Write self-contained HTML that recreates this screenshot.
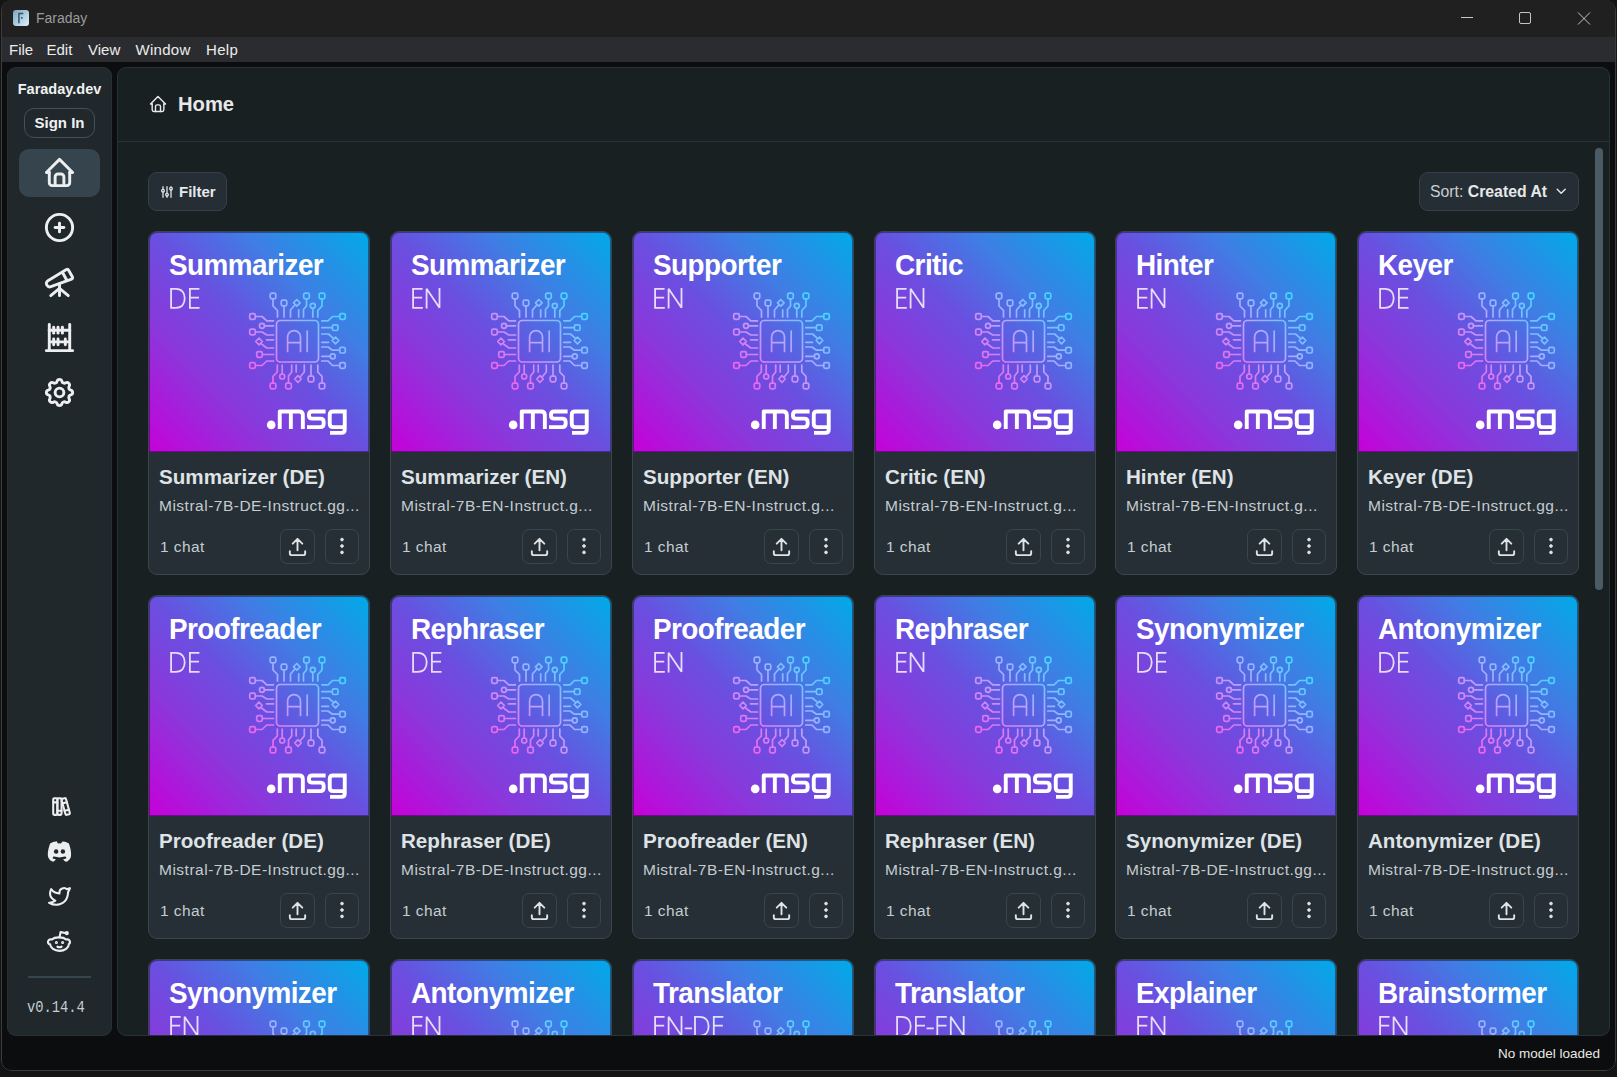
<!DOCTYPE html>
<html><head><meta charset="utf-8"><title>Faraday</title>
<style>
*{margin:0;padding:0;box-sizing:border-box}
html,body{width:1617px;height:1077px;overflow:hidden;background:#141414;font-family:"Liberation Sans",sans-serif;}
.win{position:absolute;left:1px;top:0;width:1615px;height:1071px;border-radius:10px 10px 10px 10px;background:#0b0d0e;overflow:hidden}
.frame{position:absolute;left:0;top:-1px;width:1615px;height:1072px;border:1px solid #3b3b3b;border-radius:10px;z-index:50}
.titlebar{position:absolute;left:0;top:0;width:1615px;height:37px;background:#202020}
.title{position:absolute;left:35px;top:10px;font-size:14px;color:#9b9b9b;line-height:17px}
.wc{position:absolute;top:0;height:37px}
.menubar{position:absolute;left:0;top:37px;width:1615px;height:25px;background:#2b2c2f}
.menu{position:absolute;top:3.5px;font-size:15px;color:#ececec;line-height:18px}
.side{position:absolute;left:6px;top:67px;width:105px;height:969px;background:#20282c;border-radius:9px;box-shadow:inset 0 0 0 1px #263136}
.main{position:absolute;left:116px;top:67px;width:1493px;height:969px;background:#192022;border:1px solid #28323a;border-radius:9px;overflow:hidden}
.hdr{position:absolute;left:0;top:0;width:100%;height:74px;border-bottom:1px solid #28333a}
.scroll{position:absolute;left:0;top:75px;width:100%;height:894px;overflow:hidden}
.btn{position:absolute;background:#252e34;border:1px solid #354149;border-radius:9px;color:#e6e8ea}
.card{position:absolute;width:222px;height:344px;background:#262f35;border:1px solid #3a464d;border-radius:9px;overflow:hidden}
.card .img{position:absolute;left:0;top:0;width:220px;height:220px;background:linear-gradient(45deg,#c600d8 0%,#8a38dc 30%,#6a4fe0 50%,#3f7ee4 72%,#00aae8 100%);border-radius:8px 8px 0 0;overflow:hidden;box-shadow:inset 0 0 0 1px rgba(20,10,60,0.45)}
.card .img svg{position:absolute;left:0;top:0}
.t1{position:absolute;left:20px;top:16px;font-size:30px;font-weight:bold;color:#fff;letter-spacing:-0.6px;line-height:34px;white-space:nowrap;transform:scaleX(0.93);transform-origin:0 0}
.nm{position:absolute;left:10px;top:233px;font-size:20.6px;font-weight:bold;color:#dfe3e6;line-height:24px;white-space:nowrap}
.md{position:absolute;left:10px;top:265px;letter-spacing:0.5px;font-size:15.5px;color:#c5ccd1;line-height:18px;white-space:nowrap}
.ch{position:absolute;left:11px;top:306px;letter-spacing:0.4px;font-size:15.5px;color:#c5ccd1;line-height:18px}
.b1,.b2{position:absolute;top:297px;width:35px;height:35px;border:1px solid #38454c;border-radius:7px;color:#dfe3e6}
.b1{left:131px} .b2{left:176px;width:34px}
.b1 svg{position:absolute;left:4.8px;top:4.9px} .b2 svg{position:absolute;left:4.6px;top:5.3px}
.b1 svg path{fill:none;stroke:currentColor;stroke-width:2;stroke-linecap:round;stroke-linejoin:round}
.b2 svg circle{fill:currentColor;stroke:currentColor;stroke-width:1}
.sicon{position:absolute;color:#eceeef}
.status{position:absolute;right:16px;top:1046px;font-size:13.5px;color:#e8e8e2;line-height:16px}
</style></head><body>
<svg width="0" height="0" style="position:absolute">
<defs>
<linearGradient id="cg" gradientUnits="userSpaceOnUse" x1="5" y1="102" x2="102" y2="5">
<stop offset="0" stop-color="#ff4fe6"/><stop offset="0.5" stop-color="#b9a4ff"/><stop offset="1" stop-color="#1fe4ff"/>
</linearGradient>
</defs></svg>
<div class="win">
 <div class="frame"></div>
 <div class="titlebar">
  <svg style="position:absolute;left:12px;top:10px" width="16" height="16" viewBox="0 0 16 16"><defs><linearGradient id="ag" x1="0" y1="0" x2="1" y2="1"><stop offset="0" stop-color="#7ea4c0"/><stop offset="0.6" stop-color="#b4d3e6"/><stop offset="1" stop-color="#e0f3fc"/></linearGradient></defs><rect x="0" y="0" width="16" height="16" rx="3" fill="url(#ag)"/><path d="M5.9 13.2V3.5H10.3" fill="none" stroke="#3a5264" stroke-width="1.5"/><rect x="8" y="7.1" width="1.6" height="1.6" fill="#3a5264"/></svg>
  <div class="title">Faraday</div>
  <svg class="wc" style="left:1439px" width="175" height="37" viewBox="0 0 175 37" fill="none" stroke="#c5c5c5" stroke-width="1">
   <path d="M21 17.5H33"/>
   <rect x="79.5" y="12.5" width="11" height="11" rx="1.5"/>
   <path d="M138 12.5L150 24.5M150 12.5L138 24.5"/>
  </svg>
 </div>
 <div class="menubar">
  <div class="menu" style="left:8px">File</div>
  <div class="menu" style="left:45.5px">Edit</div>
  <div class="menu" style="left:87px">View</div>
  <div class="menu" style="left:134.5px;letter-spacing:0.3px">Window</div>
  <div class="menu" style="left:205px;letter-spacing:0.3px">Help</div>
 </div>
 <div class="side">
  <div style="position:absolute;left:0;top:13px;width:105px;text-align:center;font-size:14.5px;font-weight:bold;color:#f0f1f2;line-height:18px">Faraday.dev</div>
  <div style="position:absolute;left:17px;top:41px;width:71px;height:30px;border:1px solid #40515a;border-radius:10px;text-align:center;font-size:15px;font-weight:bold;color:#f0f1f2;line-height:28px">Sign In</div>
  <div style="position:absolute;left:12px;top:82px;width:81px;height:48px;background:#36454d;border-radius:10px"></div>
  <svg class="sicon" style="left:35.0px;top:87.8px" width="35" height="35" viewBox="0 0 24 24" fill="none" stroke="currentColor" stroke-width="2" stroke-linecap="round" stroke-linejoin="round"><path d="M5 12l-2 0l9 -9l9 9l-2 0"/><path d="M5 12v7a2 2 0 0 0 2 2h10a2 2 0 0 0 2 -2v-7"/><path d="M9 21v-6a2 2 0 0 1 2 -2h2a2 2 0 0 1 2 2v6"/></svg><svg class="sicon" style="left:34.8px;top:142.8px" width="35" height="35" viewBox="0 0 24 24" fill="none" stroke="currentColor" stroke-width="2" stroke-linecap="round" stroke-linejoin="round"><circle cx="12" cy="12" r="9"/><path d="M9 12h6"/><path d="M12 9v6"/></svg><svg class="sicon" style="left:34.8px;top:197.7px" width="35" height="35" viewBox="0 0 24 24" fill="none" stroke="currentColor" stroke-width="2" stroke-linecap="round" stroke-linejoin="round"><path d="M6 21l6 -5l6 5"/><path d="M12 13v8"/><path d="M3.294 13.678l.166 .281c.52 .88 1.624 1.265 2.605 .91l14.242 -5.165a1.023 1.023 0 0 0 .565 -1.456l-2.62 -4.705a1.087 1.087 0 0 0 -1.447 -.42l-.056 .032l-12.694 7.618c-1.02 .613 -1.357 1.897 -.76 2.905z"/><path d="M14 5l3 5.5"/></svg><svg class="sicon" style="left:34.8px;top:252.7px" width="35" height="35" viewBox="0 0 24 24" fill="none" stroke="currentColor" stroke-width="2" stroke-linecap="round" stroke-linejoin="round"><path d="M5 3v18"/><path d="M19 21v-18"/><path d="M5 7h14"/><path d="M5 15h14"/><path d="M8 13v4"/><path d="M11 13v4"/><path d="M16 13v4"/><path d="M14 5v4"/><path d="M11 5v4"/><path d="M8 5v4"/><path d="M3 21h18"/></svg><svg class="sicon" style="left:34.8px;top:307.5px" width="35" height="35" viewBox="0 0 24 24" fill="none" stroke="currentColor" stroke-width="2" stroke-linecap="round" stroke-linejoin="round"><path d="M10.325 4.317c.426 -1.756 2.924 -1.756 3.35 0a1.724 1.724 0 0 0 2.573 1.066c1.543 -.94 3.31 .826 2.37 2.37a1.724 1.724 0 0 0 1.065 2.572c1.756 .426 1.756 2.924 0 3.35a1.724 1.724 0 0 0 -1.066 2.573c.94 1.543 -.826 3.31 -2.37 2.37a1.724 1.724 0 0 0 -2.572 1.065c-.426 1.756 -2.924 1.756 -3.35 0a1.724 1.724 0 0 0 -2.573 -1.066c-1.543 .94 -3.31 -.826 -2.37 -2.37a1.724 1.724 0 0 0 -1.065 -2.572c-1.756 -.426 -1.756 -2.924 0 -3.35a1.724 1.724 0 0 0 1.066 -2.573c-.94 -1.543 .826 -3.31 2.37 -2.37c1 .608 2.296 .07 2.572 -1.065z"/><path d="M9 12a3 3 0 1 0 6 0a3 3 0 0 0 -6 0"/></svg><svg class="sicon" style="left:40.9px;top:726.9px" width="25" height="25" viewBox="0 0 24 24" fill="none" stroke="currentColor" stroke-width="2" stroke-linecap="round" stroke-linejoin="round"><path d="M5 5a1 1 0 0 1 1 -1h2a1 1 0 0 1 1 1v14a1 1 0 0 1 -1 1h-2a1 1 0 0 1 -1 -1z"/><path d="M9 5a1 1 0 0 1 1 -1h2a1 1 0 0 1 1 1v14a1 1 0 0 1 -1 1h-2a1 1 0 0 1 -1 -1z"/><path d="M5 8h4"/><path d="M9 16h4"/><path d="M13.803 4.56l2.184 -.53c.562 -.135 1.133 .19 1.282 .732l3.695 13.418a1.02 1.02 0 0 1 -.634 1.219l-.133 .041l-2.184 .53c-.562 .135 -1.133 -.19 -1.282 -.732l-3.695 -13.418a1.02 1.02 0 0 1 .634 -1.219l.133 -.041z"/><path d="M14 9l4 -1"/><path d="M16 16l3.923 -.98"/></svg><svg class="sicon" style="left:39.0px;top:770.7px" width="27" height="27" viewBox="0 0 24 24" fill="currentColor" stroke="none"><path d="M14.983 3l.123 .006c2.014 .214 3.527 .672 4.966 1.673a1 1 0 0 1 .371 .488c1.876 5.315 2.373 9.987 1.451 12.28c-1.003 2.005 -2.606 3.553 -4.394 3.553c-.732 0 -1.693 -.968 -2.328 -2.045a21.512 21.512 0 0 0 2.103 -.493a1 1 0 1 0 -.55 -1.924c-3.32 .95 -6.13 .95 -9.45 0a1 1 0 0 0 -.55 1.924c.717 .204 1.416 .37 2.103 .494c-.635 1.075 -1.596 2.044 -2.328 2.044c-1.788 0 -3.391 -1.548 -4.428 -3.629c-.888 -2.217 -.39 -6.888 1.485 -12.203a1 1 0 0 1 .371 -.488c1.439 -1.001 2.952 -1.459 4.966 -1.673a1 1 0 0 1 .935 .435l.063 .107l.651 1.285l.137 -.016a12.97 12.97 0 0 1 2.643 0l.134 .015l.65 -1.284a1 1 0 0 1 .754 -.54l.122 -.009zm-5.983 7a2 2 0 0 0 -1.977 1.697l-.018 .154l-.005 .149l.005 .15a2 2 0 1 0 1.995 -2.15zm6 0a2 2 0 0 0 -1.977 1.697l-.018 .154l-.005 .149l.005 .15a2 2 0 1 0 1.995 -2.15z"/></svg><svg class="sicon" style="left:39.9px;top:816.9px" width="25" height="25" viewBox="0 0 24 24" fill="none" stroke="currentColor" stroke-width="2" stroke-linecap="round" stroke-linejoin="round"><path d="M22 4.01c-1 .49 -1.98 .689 -3 .99c-1.121 -1.265 -2.783 -1.335 -4.38 -.737s-2.643 2.06 -2.62 3.737v1c-3.245 .083 -6.135 -1.395 -8 -4c0 0 -4.182 7.433 4 11c-1.872 1.247 -3.739 2.088 -6 2c3.308 1.803 6.913 2.423 10.034 1.517c3.58 -1.04 6.522 -3.723 7.651 -7.742a13.84 13.84 0 0 0 .497 -3.753c0 -.249 1.51 -2.772 1.818 -4.013z"/></svg><svg class="sicon" style="left:40.0px;top:861.7px" width="25" height="25" viewBox="0 0 24 24" fill="none" stroke="currentColor" stroke-width="2" stroke-linecap="round" stroke-linejoin="round"><path d="M12 8c2.648 0 5.028 .826 6.675 2.14a2.5 2.5 0 0 1 2.326 4.36c0 3.59 -4.03 6.5 -9 6.5c-4.875 0 -8.845 -2.8 -9 -6.294l-1 -.206a2.5 2.5 0 0 1 2.326 -4.36c1.646 -1.313 4.026 -2.14 6.674 -2.14z"/><path d="M12 8l1 -5l6 1"/><path d="M19 4m-1 0a1 1 0 1 0 2 0a1 1 0 1 0 -2 0"/><circle cx="9" cy="13" r=".5" fill="currentColor"/><circle cx="15" cy="13" r=".5" fill="currentColor"/><path d="M10 17c.667 .333 1.333 .5 2 .5s1.333 -.167 2 -.5"/></svg>
  <div style="position:absolute;left:21px;top:909px;width:63px;height:2px;background:#36464e"></div>
  <div style="position:absolute;left:20px;top:931.5px;font-family:'Liberation Mono',monospace;font-size:17px;color:#c7cdd2;line-height:18px;transform:scaleX(0.81);transform-origin:0 0">v0.14.4</div>
 </div>
 <div class="main">
  <div class="hdr">
   <svg style="position:absolute;left:30px;top:26px" width="20" height="20" viewBox="0 0 24 24" fill="none" stroke="currentColor" stroke-width="1.7" stroke-linecap="round" stroke-linejoin="round" color="#e8eaec"><path d="M5 12l-2 0l9 -9l9 9l-2 0"/><path d="M5 12v7a2 2 0 0 0 2 2h10a2 2 0 0 0 2 -2v-7"/><path d="M9 21v-6a2 2 0 0 1 2 -2h2a2 2 0 0 1 2 2v6"/></svg>
   <div style="position:absolute;left:60px;top:23px;font-size:20.2px;font-weight:bold;color:#e6e8ea;line-height:26px">Home</div>
  </div>
  <div class="scroll">
   <div class="btn" style="left:30px;top:29px;width:79px;height:39px">
     <svg style="position:absolute;left:9.8px;top:10.8px" width="16" height="16" viewBox="0 0 24 24" fill="none" stroke="currentColor" stroke-width="1.9" stroke-linecap="round" stroke-linejoin="round"><path d="M6 4v4M6 12v8M12 4v10M12 18v2M18 4v1M18 9v11"/><circle cx="6" cy="10" r="2"/><circle cx="12" cy="16" r="2"/><circle cx="18" cy="7" r="2"/></svg>
     <div style="position:absolute;left:30px;top:10px;font-size:15px;font-weight:bold;line-height:18px">Filter</div>
   </div>
   <div class="btn" style="left:1301px;top:29px;width:160px;height:39px">
     <div style="position:absolute;left:10px;top:9.5px;font-size:15.8px;line-height:18px;white-space:nowrap"><span style="color:#c9ced2">Sort:</span> <b>Created At</b></div>
     <svg style="position:absolute;left:135.5px;top:15px" width="11" height="8" viewBox="0 0 11 8" fill="none" stroke="#e6e8ea" stroke-width="1.4" stroke-linecap="round" stroke-linejoin="round"><path d="M1.2 1.2L5.2 5.2L9.2 1.2"/></svg>
   </div>
   <div class="card" style="left:30.0px;top:88.0px">
<div class="img"><svg width="220" height="220" viewBox="0 0 220 220"><g transform="translate(95,56)" fill="none" stroke="url(#cg)" stroke-width="1.7" stroke-linecap="round" stroke-linejoin="round"><rect x="32.5" y="32.5" width="42" height="41.5" rx="3.8"/><path d="M43.6,63.5V49A6.45,6.45 0 0 1 56.5,49V63.5M43.6,54.6H56.5M63.2,43V63.5"/><rect x="26.20" y="5.20" width="5.6" height="5.6" rx="1.6"/><path d="M29,11L29,18L33.5,22.5L33.5,29"/><rect x="37.20" y="12.20" width="5.6" height="5.6" rx="1.6"/><path d="M40,18L40,29"/><path d="M52.8,11.5L56.099999999999994,14.8L52.8,18.1L49.5,14.8Z" stroke-linejoin="round"/><path d="M50.6,17.3L46.5,22L46.5,29"/><path d="M54.7,21.8L54.7,29"/><rect x="59.70" y="5.20" width="5.6" height="5.6" rx="1.6"/><path d="M62.5,11L62.5,18L59.5,21.5L59.5,29"/><circle cx="68.8" cy="17.8" r="2.5"/><path d="M68.8,20.3L68.8,29"/><rect x="75.20" y="5.20" width="5.6" height="5.6" rx="1.6"/><path d="M78,11L78,18L73.8,22.5L73.8,29"/><path d="M33.3,77L33.3,84L29,88.3L29,95"/><rect x="26.20" y="95.20" width="5.6" height="5.6" rx="1.6"/><path d="M38.2,77L38.2,86"/><circle cx="38.2" cy="88.5" r="2.5"/><path d="M47.7,77L47.7,84L44.5,88L44.5,95"/><rect x="41.70" y="95.20" width="5.6" height="5.6" rx="1.6"/><path d="M52.2,77L52.2,84"/><path d="M60.3,77L60.3,84L56.3,88.8"/><path d="M54,87.7L57.3,91L54,94.3L50.7,91Z" stroke-linejoin="round"/><path d="M67,77L67,88"/><rect x="64.20" y="88.20" width="5.6" height="5.6" rx="1.6"/><path d="M73.8,77L73.8,84L78,88.3L78,95"/><rect x="75.20" y="95.20" width="5.6" height="5.6" rx="1.6"/><rect x="5.70" y="25.70" width="5.6" height="5.6" rx="1.6"/><path d="M11.5,28.5L18,28.5L22.8,32.8L29.5,32.8"/><circle cx="18" cy="37.8" r="2.5"/><path d="M20.5,37.8L29.5,37.8"/><rect x="5.70" y="41.20" width="5.6" height="5.6" rx="1.6"/><path d="M11.5,44L18,44L22.8,47L29.5,47"/><path d="M22.5,51.8L29.5,51.8"/><path d="M15,50.2L18.3,53.5L15,56.8L11.7,53.5Z" stroke-linejoin="round"/><path d="M17.5,56L22.8,60L29.5,60"/><rect x="12.70" y="63.70" width="5.6" height="5.6" rx="1.6"/><path d="M18.5,66.5L29.5,66.5"/><rect x="5.70" y="74.70" width="5.6" height="5.6" rx="1.6"/><path d="M11.5,77.5L18,77.5L22.8,73L29.5,73"/><path d="M77.8,32.8L84,32.8L88.5,28.5L95.5,28.5"/><rect x="95.70" y="25.70" width="5.6" height="5.6" rx="1.6"/><path d="M77.8,39.7L88.2,39.7"/><rect x="88.40" y="36.90" width="5.6" height="5.6" rx="1.6"/><path d="M77.8,46L84.5,46L89.2,50.2"/><path d="M91.5,49.2L94.8,52.5L91.5,55.8L88.2,52.5Z" stroke-linejoin="round"/><path d="M77.8,54.3L84.5,54.3"/><path d="M77.8,59L84,59L88.5,62.2L95.5,62.2"/><rect x="95.70" y="59.40" width="5.6" height="5.6" rx="1.6"/><path d="M77.8,68.3L86.3,68.3"/><circle cx="88.8" cy="68.3" r="2.5"/><path d="M77.8,73L84,73L88.5,77.5L95.5,77.5"/><rect x="95.70" y="74.70" width="5.6" height="5.6" rx="1.6"/></g><circle cx="122.2" cy="192.9" r="4.3" fill="#fff"/><g fill="none" stroke="#fff" stroke-width="3.9" stroke-linejoin="round"><path d="M130.75,196.9V179.5H150.3Q153.85,179.5 153.85,183.2V196.9M141.85,179.5V196.9"/><path d="M176.6,179.5H163.3Q159.95,179.5 159.95,182.8V183.4Q159.95,186.6 163.3,186.6H171.3Q174.65,186.6 174.65,189.9V191.8Q174.65,195.1 171.3,195.1H158"/><path d="M195.75,179.5H184.1Q180.75,179.5 180.75,182.8V191.8Q180.75,195.1 184.1,195.1H195.75M195.75,177.6V197.6Q195.75,200.9 192.4,200.9H181"/></g><path d="M22.10,56.8V75.8H26.90C33.30,75.8 35.70,71.2 35.70,66.3C35.70,61.4 33.30,56.8 26.90,56.8ZM50.40,56.8H40.90V75.8H50.60M40.90,65.7H50.00" fill="none" stroke="#fff" stroke-opacity="0.82" stroke-width="1.8" stroke-linejoin="miter" stroke-miterlimit="1.5"/></svg>
<div class="t1">Summarizer</div></div>
<div class="nm">Summarizer (DE)</div><div class="md">Mistral-7B-DE-Instruct.gg...</div>
<div class="ch">1 chat</div>
<div class="b1"><svg width="23" height="23" viewBox="0 0 24 24"><path d="M4 17v2a2 2 0 0 0 2 2h12a2 2 0 0 0 2 -2v-2M7 9l5 -5l5 5M12 4l0 12"/></svg></div>
<div class="b2"><svg width="22" height="22" viewBox="0 0 24 24"><circle cx="12" cy="5" r="1.5"/><circle cx="12" cy="12" r="1.5"/><circle cx="12" cy="19" r="1.5"/></svg></div>
</div><div class="card" style="left:272.0px;top:88.0px">
<div class="img"><svg width="220" height="220" viewBox="0 0 220 220"><g transform="translate(95,56)" fill="none" stroke="url(#cg)" stroke-width="1.7" stroke-linecap="round" stroke-linejoin="round"><rect x="32.5" y="32.5" width="42" height="41.5" rx="3.8"/><path d="M43.6,63.5V49A6.45,6.45 0 0 1 56.5,49V63.5M43.6,54.6H56.5M63.2,43V63.5"/><rect x="26.20" y="5.20" width="5.6" height="5.6" rx="1.6"/><path d="M29,11L29,18L33.5,22.5L33.5,29"/><rect x="37.20" y="12.20" width="5.6" height="5.6" rx="1.6"/><path d="M40,18L40,29"/><path d="M52.8,11.5L56.099999999999994,14.8L52.8,18.1L49.5,14.8Z" stroke-linejoin="round"/><path d="M50.6,17.3L46.5,22L46.5,29"/><path d="M54.7,21.8L54.7,29"/><rect x="59.70" y="5.20" width="5.6" height="5.6" rx="1.6"/><path d="M62.5,11L62.5,18L59.5,21.5L59.5,29"/><circle cx="68.8" cy="17.8" r="2.5"/><path d="M68.8,20.3L68.8,29"/><rect x="75.20" y="5.20" width="5.6" height="5.6" rx="1.6"/><path d="M78,11L78,18L73.8,22.5L73.8,29"/><path d="M33.3,77L33.3,84L29,88.3L29,95"/><rect x="26.20" y="95.20" width="5.6" height="5.6" rx="1.6"/><path d="M38.2,77L38.2,86"/><circle cx="38.2" cy="88.5" r="2.5"/><path d="M47.7,77L47.7,84L44.5,88L44.5,95"/><rect x="41.70" y="95.20" width="5.6" height="5.6" rx="1.6"/><path d="M52.2,77L52.2,84"/><path d="M60.3,77L60.3,84L56.3,88.8"/><path d="M54,87.7L57.3,91L54,94.3L50.7,91Z" stroke-linejoin="round"/><path d="M67,77L67,88"/><rect x="64.20" y="88.20" width="5.6" height="5.6" rx="1.6"/><path d="M73.8,77L73.8,84L78,88.3L78,95"/><rect x="75.20" y="95.20" width="5.6" height="5.6" rx="1.6"/><rect x="5.70" y="25.70" width="5.6" height="5.6" rx="1.6"/><path d="M11.5,28.5L18,28.5L22.8,32.8L29.5,32.8"/><circle cx="18" cy="37.8" r="2.5"/><path d="M20.5,37.8L29.5,37.8"/><rect x="5.70" y="41.20" width="5.6" height="5.6" rx="1.6"/><path d="M11.5,44L18,44L22.8,47L29.5,47"/><path d="M22.5,51.8L29.5,51.8"/><path d="M15,50.2L18.3,53.5L15,56.8L11.7,53.5Z" stroke-linejoin="round"/><path d="M17.5,56L22.8,60L29.5,60"/><rect x="12.70" y="63.70" width="5.6" height="5.6" rx="1.6"/><path d="M18.5,66.5L29.5,66.5"/><rect x="5.70" y="74.70" width="5.6" height="5.6" rx="1.6"/><path d="M11.5,77.5L18,77.5L22.8,73L29.5,73"/><path d="M77.8,32.8L84,32.8L88.5,28.5L95.5,28.5"/><rect x="95.70" y="25.70" width="5.6" height="5.6" rx="1.6"/><path d="M77.8,39.7L88.2,39.7"/><rect x="88.40" y="36.90" width="5.6" height="5.6" rx="1.6"/><path d="M77.8,46L84.5,46L89.2,50.2"/><path d="M91.5,49.2L94.8,52.5L91.5,55.8L88.2,52.5Z" stroke-linejoin="round"/><path d="M77.8,54.3L84.5,54.3"/><path d="M77.8,59L84,59L88.5,62.2L95.5,62.2"/><rect x="95.70" y="59.40" width="5.6" height="5.6" rx="1.6"/><path d="M77.8,68.3L86.3,68.3"/><circle cx="88.8" cy="68.3" r="2.5"/><path d="M77.8,73L84,73L88.5,77.5L95.5,77.5"/><rect x="95.70" y="74.70" width="5.6" height="5.6" rx="1.6"/></g><circle cx="122.2" cy="192.9" r="4.3" fill="#fff"/><g fill="none" stroke="#fff" stroke-width="3.9" stroke-linejoin="round"><path d="M130.75,196.9V179.5H150.3Q153.85,179.5 153.85,183.2V196.9M141.85,179.5V196.9"/><path d="M176.6,179.5H163.3Q159.95,179.5 159.95,182.8V183.4Q159.95,186.6 163.3,186.6H171.3Q174.65,186.6 174.65,189.9V191.8Q174.65,195.1 171.3,195.1H158"/><path d="M195.75,179.5H184.1Q180.75,179.5 180.75,182.8V191.8Q180.75,195.1 184.1,195.1H195.75M195.75,177.6V197.6Q195.75,200.9 192.4,200.9H181"/></g><path d="M31.60,56.8H22.10V75.8H31.80M22.10,65.7H31.20M35.60,76.6V56.8L48.50,75.8V56" fill="none" stroke="#fff" stroke-opacity="0.82" stroke-width="1.8" stroke-linejoin="miter" stroke-miterlimit="1.5"/></svg>
<div class="t1">Summarizer</div></div>
<div class="nm">Summarizer (EN)</div><div class="md">Mistral-7B-EN-Instruct.g...</div>
<div class="ch">1 chat</div>
<div class="b1"><svg width="23" height="23" viewBox="0 0 24 24"><path d="M4 17v2a2 2 0 0 0 2 2h12a2 2 0 0 0 2 -2v-2M7 9l5 -5l5 5M12 4l0 12"/></svg></div>
<div class="b2"><svg width="22" height="22" viewBox="0 0 24 24"><circle cx="12" cy="5" r="1.5"/><circle cx="12" cy="12" r="1.5"/><circle cx="12" cy="19" r="1.5"/></svg></div>
</div><div class="card" style="left:514.0px;top:88.0px">
<div class="img"><svg width="220" height="220" viewBox="0 0 220 220"><g transform="translate(95,56)" fill="none" stroke="url(#cg)" stroke-width="1.7" stroke-linecap="round" stroke-linejoin="round"><rect x="32.5" y="32.5" width="42" height="41.5" rx="3.8"/><path d="M43.6,63.5V49A6.45,6.45 0 0 1 56.5,49V63.5M43.6,54.6H56.5M63.2,43V63.5"/><rect x="26.20" y="5.20" width="5.6" height="5.6" rx="1.6"/><path d="M29,11L29,18L33.5,22.5L33.5,29"/><rect x="37.20" y="12.20" width="5.6" height="5.6" rx="1.6"/><path d="M40,18L40,29"/><path d="M52.8,11.5L56.099999999999994,14.8L52.8,18.1L49.5,14.8Z" stroke-linejoin="round"/><path d="M50.6,17.3L46.5,22L46.5,29"/><path d="M54.7,21.8L54.7,29"/><rect x="59.70" y="5.20" width="5.6" height="5.6" rx="1.6"/><path d="M62.5,11L62.5,18L59.5,21.5L59.5,29"/><circle cx="68.8" cy="17.8" r="2.5"/><path d="M68.8,20.3L68.8,29"/><rect x="75.20" y="5.20" width="5.6" height="5.6" rx="1.6"/><path d="M78,11L78,18L73.8,22.5L73.8,29"/><path d="M33.3,77L33.3,84L29,88.3L29,95"/><rect x="26.20" y="95.20" width="5.6" height="5.6" rx="1.6"/><path d="M38.2,77L38.2,86"/><circle cx="38.2" cy="88.5" r="2.5"/><path d="M47.7,77L47.7,84L44.5,88L44.5,95"/><rect x="41.70" y="95.20" width="5.6" height="5.6" rx="1.6"/><path d="M52.2,77L52.2,84"/><path d="M60.3,77L60.3,84L56.3,88.8"/><path d="M54,87.7L57.3,91L54,94.3L50.7,91Z" stroke-linejoin="round"/><path d="M67,77L67,88"/><rect x="64.20" y="88.20" width="5.6" height="5.6" rx="1.6"/><path d="M73.8,77L73.8,84L78,88.3L78,95"/><rect x="75.20" y="95.20" width="5.6" height="5.6" rx="1.6"/><rect x="5.70" y="25.70" width="5.6" height="5.6" rx="1.6"/><path d="M11.5,28.5L18,28.5L22.8,32.8L29.5,32.8"/><circle cx="18" cy="37.8" r="2.5"/><path d="M20.5,37.8L29.5,37.8"/><rect x="5.70" y="41.20" width="5.6" height="5.6" rx="1.6"/><path d="M11.5,44L18,44L22.8,47L29.5,47"/><path d="M22.5,51.8L29.5,51.8"/><path d="M15,50.2L18.3,53.5L15,56.8L11.7,53.5Z" stroke-linejoin="round"/><path d="M17.5,56L22.8,60L29.5,60"/><rect x="12.70" y="63.70" width="5.6" height="5.6" rx="1.6"/><path d="M18.5,66.5L29.5,66.5"/><rect x="5.70" y="74.70" width="5.6" height="5.6" rx="1.6"/><path d="M11.5,77.5L18,77.5L22.8,73L29.5,73"/><path d="M77.8,32.8L84,32.8L88.5,28.5L95.5,28.5"/><rect x="95.70" y="25.70" width="5.6" height="5.6" rx="1.6"/><path d="M77.8,39.7L88.2,39.7"/><rect x="88.40" y="36.90" width="5.6" height="5.6" rx="1.6"/><path d="M77.8,46L84.5,46L89.2,50.2"/><path d="M91.5,49.2L94.8,52.5L91.5,55.8L88.2,52.5Z" stroke-linejoin="round"/><path d="M77.8,54.3L84.5,54.3"/><path d="M77.8,59L84,59L88.5,62.2L95.5,62.2"/><rect x="95.70" y="59.40" width="5.6" height="5.6" rx="1.6"/><path d="M77.8,68.3L86.3,68.3"/><circle cx="88.8" cy="68.3" r="2.5"/><path d="M77.8,73L84,73L88.5,77.5L95.5,77.5"/><rect x="95.70" y="74.70" width="5.6" height="5.6" rx="1.6"/></g><circle cx="122.2" cy="192.9" r="4.3" fill="#fff"/><g fill="none" stroke="#fff" stroke-width="3.9" stroke-linejoin="round"><path d="M130.75,196.9V179.5H150.3Q153.85,179.5 153.85,183.2V196.9M141.85,179.5V196.9"/><path d="M176.6,179.5H163.3Q159.95,179.5 159.95,182.8V183.4Q159.95,186.6 163.3,186.6H171.3Q174.65,186.6 174.65,189.9V191.8Q174.65,195.1 171.3,195.1H158"/><path d="M195.75,179.5H184.1Q180.75,179.5 180.75,182.8V191.8Q180.75,195.1 184.1,195.1H195.75M195.75,177.6V197.6Q195.75,200.9 192.4,200.9H181"/></g><path d="M31.60,56.8H22.10V75.8H31.80M22.10,65.7H31.20M35.60,76.6V56.8L48.50,75.8V56" fill="none" stroke="#fff" stroke-opacity="0.82" stroke-width="1.8" stroke-linejoin="miter" stroke-miterlimit="1.5"/></svg>
<div class="t1">Supporter</div></div>
<div class="nm">Supporter (EN)</div><div class="md">Mistral-7B-EN-Instruct.g...</div>
<div class="ch">1 chat</div>
<div class="b1"><svg width="23" height="23" viewBox="0 0 24 24"><path d="M4 17v2a2 2 0 0 0 2 2h12a2 2 0 0 0 2 -2v-2M7 9l5 -5l5 5M12 4l0 12"/></svg></div>
<div class="b2"><svg width="22" height="22" viewBox="0 0 24 24"><circle cx="12" cy="5" r="1.5"/><circle cx="12" cy="12" r="1.5"/><circle cx="12" cy="19" r="1.5"/></svg></div>
</div><div class="card" style="left:756.0px;top:88.0px">
<div class="img"><svg width="220" height="220" viewBox="0 0 220 220"><g transform="translate(95,56)" fill="none" stroke="url(#cg)" stroke-width="1.7" stroke-linecap="round" stroke-linejoin="round"><rect x="32.5" y="32.5" width="42" height="41.5" rx="3.8"/><path d="M43.6,63.5V49A6.45,6.45 0 0 1 56.5,49V63.5M43.6,54.6H56.5M63.2,43V63.5"/><rect x="26.20" y="5.20" width="5.6" height="5.6" rx="1.6"/><path d="M29,11L29,18L33.5,22.5L33.5,29"/><rect x="37.20" y="12.20" width="5.6" height="5.6" rx="1.6"/><path d="M40,18L40,29"/><path d="M52.8,11.5L56.099999999999994,14.8L52.8,18.1L49.5,14.8Z" stroke-linejoin="round"/><path d="M50.6,17.3L46.5,22L46.5,29"/><path d="M54.7,21.8L54.7,29"/><rect x="59.70" y="5.20" width="5.6" height="5.6" rx="1.6"/><path d="M62.5,11L62.5,18L59.5,21.5L59.5,29"/><circle cx="68.8" cy="17.8" r="2.5"/><path d="M68.8,20.3L68.8,29"/><rect x="75.20" y="5.20" width="5.6" height="5.6" rx="1.6"/><path d="M78,11L78,18L73.8,22.5L73.8,29"/><path d="M33.3,77L33.3,84L29,88.3L29,95"/><rect x="26.20" y="95.20" width="5.6" height="5.6" rx="1.6"/><path d="M38.2,77L38.2,86"/><circle cx="38.2" cy="88.5" r="2.5"/><path d="M47.7,77L47.7,84L44.5,88L44.5,95"/><rect x="41.70" y="95.20" width="5.6" height="5.6" rx="1.6"/><path d="M52.2,77L52.2,84"/><path d="M60.3,77L60.3,84L56.3,88.8"/><path d="M54,87.7L57.3,91L54,94.3L50.7,91Z" stroke-linejoin="round"/><path d="M67,77L67,88"/><rect x="64.20" y="88.20" width="5.6" height="5.6" rx="1.6"/><path d="M73.8,77L73.8,84L78,88.3L78,95"/><rect x="75.20" y="95.20" width="5.6" height="5.6" rx="1.6"/><rect x="5.70" y="25.70" width="5.6" height="5.6" rx="1.6"/><path d="M11.5,28.5L18,28.5L22.8,32.8L29.5,32.8"/><circle cx="18" cy="37.8" r="2.5"/><path d="M20.5,37.8L29.5,37.8"/><rect x="5.70" y="41.20" width="5.6" height="5.6" rx="1.6"/><path d="M11.5,44L18,44L22.8,47L29.5,47"/><path d="M22.5,51.8L29.5,51.8"/><path d="M15,50.2L18.3,53.5L15,56.8L11.7,53.5Z" stroke-linejoin="round"/><path d="M17.5,56L22.8,60L29.5,60"/><rect x="12.70" y="63.70" width="5.6" height="5.6" rx="1.6"/><path d="M18.5,66.5L29.5,66.5"/><rect x="5.70" y="74.70" width="5.6" height="5.6" rx="1.6"/><path d="M11.5,77.5L18,77.5L22.8,73L29.5,73"/><path d="M77.8,32.8L84,32.8L88.5,28.5L95.5,28.5"/><rect x="95.70" y="25.70" width="5.6" height="5.6" rx="1.6"/><path d="M77.8,39.7L88.2,39.7"/><rect x="88.40" y="36.90" width="5.6" height="5.6" rx="1.6"/><path d="M77.8,46L84.5,46L89.2,50.2"/><path d="M91.5,49.2L94.8,52.5L91.5,55.8L88.2,52.5Z" stroke-linejoin="round"/><path d="M77.8,54.3L84.5,54.3"/><path d="M77.8,59L84,59L88.5,62.2L95.5,62.2"/><rect x="95.70" y="59.40" width="5.6" height="5.6" rx="1.6"/><path d="M77.8,68.3L86.3,68.3"/><circle cx="88.8" cy="68.3" r="2.5"/><path d="M77.8,73L84,73L88.5,77.5L95.5,77.5"/><rect x="95.70" y="74.70" width="5.6" height="5.6" rx="1.6"/></g><circle cx="122.2" cy="192.9" r="4.3" fill="#fff"/><g fill="none" stroke="#fff" stroke-width="3.9" stroke-linejoin="round"><path d="M130.75,196.9V179.5H150.3Q153.85,179.5 153.85,183.2V196.9M141.85,179.5V196.9"/><path d="M176.6,179.5H163.3Q159.95,179.5 159.95,182.8V183.4Q159.95,186.6 163.3,186.6H171.3Q174.65,186.6 174.65,189.9V191.8Q174.65,195.1 171.3,195.1H158"/><path d="M195.75,179.5H184.1Q180.75,179.5 180.75,182.8V191.8Q180.75,195.1 184.1,195.1H195.75M195.75,177.6V197.6Q195.75,200.9 192.4,200.9H181"/></g><path d="M31.60,56.8H22.10V75.8H31.80M22.10,65.7H31.20M35.60,76.6V56.8L48.50,75.8V56" fill="none" stroke="#fff" stroke-opacity="0.82" stroke-width="1.8" stroke-linejoin="miter" stroke-miterlimit="1.5"/></svg>
<div class="t1">Critic</div></div>
<div class="nm">Critic (EN)</div><div class="md">Mistral-7B-EN-Instruct.g...</div>
<div class="ch">1 chat</div>
<div class="b1"><svg width="23" height="23" viewBox="0 0 24 24"><path d="M4 17v2a2 2 0 0 0 2 2h12a2 2 0 0 0 2 -2v-2M7 9l5 -5l5 5M12 4l0 12"/></svg></div>
<div class="b2"><svg width="22" height="22" viewBox="0 0 24 24"><circle cx="12" cy="5" r="1.5"/><circle cx="12" cy="12" r="1.5"/><circle cx="12" cy="19" r="1.5"/></svg></div>
</div><div class="card" style="left:997.0px;top:88.0px">
<div class="img"><svg width="220" height="220" viewBox="0 0 220 220"><g transform="translate(95,56)" fill="none" stroke="url(#cg)" stroke-width="1.7" stroke-linecap="round" stroke-linejoin="round"><rect x="32.5" y="32.5" width="42" height="41.5" rx="3.8"/><path d="M43.6,63.5V49A6.45,6.45 0 0 1 56.5,49V63.5M43.6,54.6H56.5M63.2,43V63.5"/><rect x="26.20" y="5.20" width="5.6" height="5.6" rx="1.6"/><path d="M29,11L29,18L33.5,22.5L33.5,29"/><rect x="37.20" y="12.20" width="5.6" height="5.6" rx="1.6"/><path d="M40,18L40,29"/><path d="M52.8,11.5L56.099999999999994,14.8L52.8,18.1L49.5,14.8Z" stroke-linejoin="round"/><path d="M50.6,17.3L46.5,22L46.5,29"/><path d="M54.7,21.8L54.7,29"/><rect x="59.70" y="5.20" width="5.6" height="5.6" rx="1.6"/><path d="M62.5,11L62.5,18L59.5,21.5L59.5,29"/><circle cx="68.8" cy="17.8" r="2.5"/><path d="M68.8,20.3L68.8,29"/><rect x="75.20" y="5.20" width="5.6" height="5.6" rx="1.6"/><path d="M78,11L78,18L73.8,22.5L73.8,29"/><path d="M33.3,77L33.3,84L29,88.3L29,95"/><rect x="26.20" y="95.20" width="5.6" height="5.6" rx="1.6"/><path d="M38.2,77L38.2,86"/><circle cx="38.2" cy="88.5" r="2.5"/><path d="M47.7,77L47.7,84L44.5,88L44.5,95"/><rect x="41.70" y="95.20" width="5.6" height="5.6" rx="1.6"/><path d="M52.2,77L52.2,84"/><path d="M60.3,77L60.3,84L56.3,88.8"/><path d="M54,87.7L57.3,91L54,94.3L50.7,91Z" stroke-linejoin="round"/><path d="M67,77L67,88"/><rect x="64.20" y="88.20" width="5.6" height="5.6" rx="1.6"/><path d="M73.8,77L73.8,84L78,88.3L78,95"/><rect x="75.20" y="95.20" width="5.6" height="5.6" rx="1.6"/><rect x="5.70" y="25.70" width="5.6" height="5.6" rx="1.6"/><path d="M11.5,28.5L18,28.5L22.8,32.8L29.5,32.8"/><circle cx="18" cy="37.8" r="2.5"/><path d="M20.5,37.8L29.5,37.8"/><rect x="5.70" y="41.20" width="5.6" height="5.6" rx="1.6"/><path d="M11.5,44L18,44L22.8,47L29.5,47"/><path d="M22.5,51.8L29.5,51.8"/><path d="M15,50.2L18.3,53.5L15,56.8L11.7,53.5Z" stroke-linejoin="round"/><path d="M17.5,56L22.8,60L29.5,60"/><rect x="12.70" y="63.70" width="5.6" height="5.6" rx="1.6"/><path d="M18.5,66.5L29.5,66.5"/><rect x="5.70" y="74.70" width="5.6" height="5.6" rx="1.6"/><path d="M11.5,77.5L18,77.5L22.8,73L29.5,73"/><path d="M77.8,32.8L84,32.8L88.5,28.5L95.5,28.5"/><rect x="95.70" y="25.70" width="5.6" height="5.6" rx="1.6"/><path d="M77.8,39.7L88.2,39.7"/><rect x="88.40" y="36.90" width="5.6" height="5.6" rx="1.6"/><path d="M77.8,46L84.5,46L89.2,50.2"/><path d="M91.5,49.2L94.8,52.5L91.5,55.8L88.2,52.5Z" stroke-linejoin="round"/><path d="M77.8,54.3L84.5,54.3"/><path d="M77.8,59L84,59L88.5,62.2L95.5,62.2"/><rect x="95.70" y="59.40" width="5.6" height="5.6" rx="1.6"/><path d="M77.8,68.3L86.3,68.3"/><circle cx="88.8" cy="68.3" r="2.5"/><path d="M77.8,73L84,73L88.5,77.5L95.5,77.5"/><rect x="95.70" y="74.70" width="5.6" height="5.6" rx="1.6"/></g><circle cx="122.2" cy="192.9" r="4.3" fill="#fff"/><g fill="none" stroke="#fff" stroke-width="3.9" stroke-linejoin="round"><path d="M130.75,196.9V179.5H150.3Q153.85,179.5 153.85,183.2V196.9M141.85,179.5V196.9"/><path d="M176.6,179.5H163.3Q159.95,179.5 159.95,182.8V183.4Q159.95,186.6 163.3,186.6H171.3Q174.65,186.6 174.65,189.9V191.8Q174.65,195.1 171.3,195.1H158"/><path d="M195.75,179.5H184.1Q180.75,179.5 180.75,182.8V191.8Q180.75,195.1 184.1,195.1H195.75M195.75,177.6V197.6Q195.75,200.9 192.4,200.9H181"/></g><path d="M31.60,56.8H22.10V75.8H31.80M22.10,65.7H31.20M35.60,76.6V56.8L48.50,75.8V56" fill="none" stroke="#fff" stroke-opacity="0.82" stroke-width="1.8" stroke-linejoin="miter" stroke-miterlimit="1.5"/></svg>
<div class="t1">Hinter</div></div>
<div class="nm">Hinter (EN)</div><div class="md">Mistral-7B-EN-Instruct.g...</div>
<div class="ch">1 chat</div>
<div class="b1"><svg width="23" height="23" viewBox="0 0 24 24"><path d="M4 17v2a2 2 0 0 0 2 2h12a2 2 0 0 0 2 -2v-2M7 9l5 -5l5 5M12 4l0 12"/></svg></div>
<div class="b2"><svg width="22" height="22" viewBox="0 0 24 24"><circle cx="12" cy="5" r="1.5"/><circle cx="12" cy="12" r="1.5"/><circle cx="12" cy="19" r="1.5"/></svg></div>
</div><div class="card" style="left:1239.0px;top:88.0px">
<div class="img"><svg width="220" height="220" viewBox="0 0 220 220"><g transform="translate(95,56)" fill="none" stroke="url(#cg)" stroke-width="1.7" stroke-linecap="round" stroke-linejoin="round"><rect x="32.5" y="32.5" width="42" height="41.5" rx="3.8"/><path d="M43.6,63.5V49A6.45,6.45 0 0 1 56.5,49V63.5M43.6,54.6H56.5M63.2,43V63.5"/><rect x="26.20" y="5.20" width="5.6" height="5.6" rx="1.6"/><path d="M29,11L29,18L33.5,22.5L33.5,29"/><rect x="37.20" y="12.20" width="5.6" height="5.6" rx="1.6"/><path d="M40,18L40,29"/><path d="M52.8,11.5L56.099999999999994,14.8L52.8,18.1L49.5,14.8Z" stroke-linejoin="round"/><path d="M50.6,17.3L46.5,22L46.5,29"/><path d="M54.7,21.8L54.7,29"/><rect x="59.70" y="5.20" width="5.6" height="5.6" rx="1.6"/><path d="M62.5,11L62.5,18L59.5,21.5L59.5,29"/><circle cx="68.8" cy="17.8" r="2.5"/><path d="M68.8,20.3L68.8,29"/><rect x="75.20" y="5.20" width="5.6" height="5.6" rx="1.6"/><path d="M78,11L78,18L73.8,22.5L73.8,29"/><path d="M33.3,77L33.3,84L29,88.3L29,95"/><rect x="26.20" y="95.20" width="5.6" height="5.6" rx="1.6"/><path d="M38.2,77L38.2,86"/><circle cx="38.2" cy="88.5" r="2.5"/><path d="M47.7,77L47.7,84L44.5,88L44.5,95"/><rect x="41.70" y="95.20" width="5.6" height="5.6" rx="1.6"/><path d="M52.2,77L52.2,84"/><path d="M60.3,77L60.3,84L56.3,88.8"/><path d="M54,87.7L57.3,91L54,94.3L50.7,91Z" stroke-linejoin="round"/><path d="M67,77L67,88"/><rect x="64.20" y="88.20" width="5.6" height="5.6" rx="1.6"/><path d="M73.8,77L73.8,84L78,88.3L78,95"/><rect x="75.20" y="95.20" width="5.6" height="5.6" rx="1.6"/><rect x="5.70" y="25.70" width="5.6" height="5.6" rx="1.6"/><path d="M11.5,28.5L18,28.5L22.8,32.8L29.5,32.8"/><circle cx="18" cy="37.8" r="2.5"/><path d="M20.5,37.8L29.5,37.8"/><rect x="5.70" y="41.20" width="5.6" height="5.6" rx="1.6"/><path d="M11.5,44L18,44L22.8,47L29.5,47"/><path d="M22.5,51.8L29.5,51.8"/><path d="M15,50.2L18.3,53.5L15,56.8L11.7,53.5Z" stroke-linejoin="round"/><path d="M17.5,56L22.8,60L29.5,60"/><rect x="12.70" y="63.70" width="5.6" height="5.6" rx="1.6"/><path d="M18.5,66.5L29.5,66.5"/><rect x="5.70" y="74.70" width="5.6" height="5.6" rx="1.6"/><path d="M11.5,77.5L18,77.5L22.8,73L29.5,73"/><path d="M77.8,32.8L84,32.8L88.5,28.5L95.5,28.5"/><rect x="95.70" y="25.70" width="5.6" height="5.6" rx="1.6"/><path d="M77.8,39.7L88.2,39.7"/><rect x="88.40" y="36.90" width="5.6" height="5.6" rx="1.6"/><path d="M77.8,46L84.5,46L89.2,50.2"/><path d="M91.5,49.2L94.8,52.5L91.5,55.8L88.2,52.5Z" stroke-linejoin="round"/><path d="M77.8,54.3L84.5,54.3"/><path d="M77.8,59L84,59L88.5,62.2L95.5,62.2"/><rect x="95.70" y="59.40" width="5.6" height="5.6" rx="1.6"/><path d="M77.8,68.3L86.3,68.3"/><circle cx="88.8" cy="68.3" r="2.5"/><path d="M77.8,73L84,73L88.5,77.5L95.5,77.5"/><rect x="95.70" y="74.70" width="5.6" height="5.6" rx="1.6"/></g><circle cx="122.2" cy="192.9" r="4.3" fill="#fff"/><g fill="none" stroke="#fff" stroke-width="3.9" stroke-linejoin="round"><path d="M130.75,196.9V179.5H150.3Q153.85,179.5 153.85,183.2V196.9M141.85,179.5V196.9"/><path d="M176.6,179.5H163.3Q159.95,179.5 159.95,182.8V183.4Q159.95,186.6 163.3,186.6H171.3Q174.65,186.6 174.65,189.9V191.8Q174.65,195.1 171.3,195.1H158"/><path d="M195.75,179.5H184.1Q180.75,179.5 180.75,182.8V191.8Q180.75,195.1 184.1,195.1H195.75M195.75,177.6V197.6Q195.75,200.9 192.4,200.9H181"/></g><path d="M22.10,56.8V75.8H26.90C33.30,75.8 35.70,71.2 35.70,66.3C35.70,61.4 33.30,56.8 26.90,56.8ZM50.40,56.8H40.90V75.8H50.60M40.90,65.7H50.00" fill="none" stroke="#fff" stroke-opacity="0.82" stroke-width="1.8" stroke-linejoin="miter" stroke-miterlimit="1.5"/></svg>
<div class="t1">Keyer</div></div>
<div class="nm">Keyer (DE)</div><div class="md">Mistral-7B-DE-Instruct.gg...</div>
<div class="ch">1 chat</div>
<div class="b1"><svg width="23" height="23" viewBox="0 0 24 24"><path d="M4 17v2a2 2 0 0 0 2 2h12a2 2 0 0 0 2 -2v-2M7 9l5 -5l5 5M12 4l0 12"/></svg></div>
<div class="b2"><svg width="22" height="22" viewBox="0 0 24 24"><circle cx="12" cy="5" r="1.5"/><circle cx="12" cy="12" r="1.5"/><circle cx="12" cy="19" r="1.5"/></svg></div>
</div><div class="card" style="left:30.0px;top:452.0px">
<div class="img"><svg width="220" height="220" viewBox="0 0 220 220"><g transform="translate(95,56)" fill="none" stroke="url(#cg)" stroke-width="1.7" stroke-linecap="round" stroke-linejoin="round"><rect x="32.5" y="32.5" width="42" height="41.5" rx="3.8"/><path d="M43.6,63.5V49A6.45,6.45 0 0 1 56.5,49V63.5M43.6,54.6H56.5M63.2,43V63.5"/><rect x="26.20" y="5.20" width="5.6" height="5.6" rx="1.6"/><path d="M29,11L29,18L33.5,22.5L33.5,29"/><rect x="37.20" y="12.20" width="5.6" height="5.6" rx="1.6"/><path d="M40,18L40,29"/><path d="M52.8,11.5L56.099999999999994,14.8L52.8,18.1L49.5,14.8Z" stroke-linejoin="round"/><path d="M50.6,17.3L46.5,22L46.5,29"/><path d="M54.7,21.8L54.7,29"/><rect x="59.70" y="5.20" width="5.6" height="5.6" rx="1.6"/><path d="M62.5,11L62.5,18L59.5,21.5L59.5,29"/><circle cx="68.8" cy="17.8" r="2.5"/><path d="M68.8,20.3L68.8,29"/><rect x="75.20" y="5.20" width="5.6" height="5.6" rx="1.6"/><path d="M78,11L78,18L73.8,22.5L73.8,29"/><path d="M33.3,77L33.3,84L29,88.3L29,95"/><rect x="26.20" y="95.20" width="5.6" height="5.6" rx="1.6"/><path d="M38.2,77L38.2,86"/><circle cx="38.2" cy="88.5" r="2.5"/><path d="M47.7,77L47.7,84L44.5,88L44.5,95"/><rect x="41.70" y="95.20" width="5.6" height="5.6" rx="1.6"/><path d="M52.2,77L52.2,84"/><path d="M60.3,77L60.3,84L56.3,88.8"/><path d="M54,87.7L57.3,91L54,94.3L50.7,91Z" stroke-linejoin="round"/><path d="M67,77L67,88"/><rect x="64.20" y="88.20" width="5.6" height="5.6" rx="1.6"/><path d="M73.8,77L73.8,84L78,88.3L78,95"/><rect x="75.20" y="95.20" width="5.6" height="5.6" rx="1.6"/><rect x="5.70" y="25.70" width="5.6" height="5.6" rx="1.6"/><path d="M11.5,28.5L18,28.5L22.8,32.8L29.5,32.8"/><circle cx="18" cy="37.8" r="2.5"/><path d="M20.5,37.8L29.5,37.8"/><rect x="5.70" y="41.20" width="5.6" height="5.6" rx="1.6"/><path d="M11.5,44L18,44L22.8,47L29.5,47"/><path d="M22.5,51.8L29.5,51.8"/><path d="M15,50.2L18.3,53.5L15,56.8L11.7,53.5Z" stroke-linejoin="round"/><path d="M17.5,56L22.8,60L29.5,60"/><rect x="12.70" y="63.70" width="5.6" height="5.6" rx="1.6"/><path d="M18.5,66.5L29.5,66.5"/><rect x="5.70" y="74.70" width="5.6" height="5.6" rx="1.6"/><path d="M11.5,77.5L18,77.5L22.8,73L29.5,73"/><path d="M77.8,32.8L84,32.8L88.5,28.5L95.5,28.5"/><rect x="95.70" y="25.70" width="5.6" height="5.6" rx="1.6"/><path d="M77.8,39.7L88.2,39.7"/><rect x="88.40" y="36.90" width="5.6" height="5.6" rx="1.6"/><path d="M77.8,46L84.5,46L89.2,50.2"/><path d="M91.5,49.2L94.8,52.5L91.5,55.8L88.2,52.5Z" stroke-linejoin="round"/><path d="M77.8,54.3L84.5,54.3"/><path d="M77.8,59L84,59L88.5,62.2L95.5,62.2"/><rect x="95.70" y="59.40" width="5.6" height="5.6" rx="1.6"/><path d="M77.8,68.3L86.3,68.3"/><circle cx="88.8" cy="68.3" r="2.5"/><path d="M77.8,73L84,73L88.5,77.5L95.5,77.5"/><rect x="95.70" y="74.70" width="5.6" height="5.6" rx="1.6"/></g><circle cx="122.2" cy="192.9" r="4.3" fill="#fff"/><g fill="none" stroke="#fff" stroke-width="3.9" stroke-linejoin="round"><path d="M130.75,196.9V179.5H150.3Q153.85,179.5 153.85,183.2V196.9M141.85,179.5V196.9"/><path d="M176.6,179.5H163.3Q159.95,179.5 159.95,182.8V183.4Q159.95,186.6 163.3,186.6H171.3Q174.65,186.6 174.65,189.9V191.8Q174.65,195.1 171.3,195.1H158"/><path d="M195.75,179.5H184.1Q180.75,179.5 180.75,182.8V191.8Q180.75,195.1 184.1,195.1H195.75M195.75,177.6V197.6Q195.75,200.9 192.4,200.9H181"/></g><path d="M22.10,56.8V75.8H26.90C33.30,75.8 35.70,71.2 35.70,66.3C35.70,61.4 33.30,56.8 26.90,56.8ZM50.40,56.8H40.90V75.8H50.60M40.90,65.7H50.00" fill="none" stroke="#fff" stroke-opacity="0.82" stroke-width="1.8" stroke-linejoin="miter" stroke-miterlimit="1.5"/></svg>
<div class="t1">Proofreader</div></div>
<div class="nm">Proofreader (DE)</div><div class="md">Mistral-7B-DE-Instruct.gg...</div>
<div class="ch">1 chat</div>
<div class="b1"><svg width="23" height="23" viewBox="0 0 24 24"><path d="M4 17v2a2 2 0 0 0 2 2h12a2 2 0 0 0 2 -2v-2M7 9l5 -5l5 5M12 4l0 12"/></svg></div>
<div class="b2"><svg width="22" height="22" viewBox="0 0 24 24"><circle cx="12" cy="5" r="1.5"/><circle cx="12" cy="12" r="1.5"/><circle cx="12" cy="19" r="1.5"/></svg></div>
</div><div class="card" style="left:272.0px;top:452.0px">
<div class="img"><svg width="220" height="220" viewBox="0 0 220 220"><g transform="translate(95,56)" fill="none" stroke="url(#cg)" stroke-width="1.7" stroke-linecap="round" stroke-linejoin="round"><rect x="32.5" y="32.5" width="42" height="41.5" rx="3.8"/><path d="M43.6,63.5V49A6.45,6.45 0 0 1 56.5,49V63.5M43.6,54.6H56.5M63.2,43V63.5"/><rect x="26.20" y="5.20" width="5.6" height="5.6" rx="1.6"/><path d="M29,11L29,18L33.5,22.5L33.5,29"/><rect x="37.20" y="12.20" width="5.6" height="5.6" rx="1.6"/><path d="M40,18L40,29"/><path d="M52.8,11.5L56.099999999999994,14.8L52.8,18.1L49.5,14.8Z" stroke-linejoin="round"/><path d="M50.6,17.3L46.5,22L46.5,29"/><path d="M54.7,21.8L54.7,29"/><rect x="59.70" y="5.20" width="5.6" height="5.6" rx="1.6"/><path d="M62.5,11L62.5,18L59.5,21.5L59.5,29"/><circle cx="68.8" cy="17.8" r="2.5"/><path d="M68.8,20.3L68.8,29"/><rect x="75.20" y="5.20" width="5.6" height="5.6" rx="1.6"/><path d="M78,11L78,18L73.8,22.5L73.8,29"/><path d="M33.3,77L33.3,84L29,88.3L29,95"/><rect x="26.20" y="95.20" width="5.6" height="5.6" rx="1.6"/><path d="M38.2,77L38.2,86"/><circle cx="38.2" cy="88.5" r="2.5"/><path d="M47.7,77L47.7,84L44.5,88L44.5,95"/><rect x="41.70" y="95.20" width="5.6" height="5.6" rx="1.6"/><path d="M52.2,77L52.2,84"/><path d="M60.3,77L60.3,84L56.3,88.8"/><path d="M54,87.7L57.3,91L54,94.3L50.7,91Z" stroke-linejoin="round"/><path d="M67,77L67,88"/><rect x="64.20" y="88.20" width="5.6" height="5.6" rx="1.6"/><path d="M73.8,77L73.8,84L78,88.3L78,95"/><rect x="75.20" y="95.20" width="5.6" height="5.6" rx="1.6"/><rect x="5.70" y="25.70" width="5.6" height="5.6" rx="1.6"/><path d="M11.5,28.5L18,28.5L22.8,32.8L29.5,32.8"/><circle cx="18" cy="37.8" r="2.5"/><path d="M20.5,37.8L29.5,37.8"/><rect x="5.70" y="41.20" width="5.6" height="5.6" rx="1.6"/><path d="M11.5,44L18,44L22.8,47L29.5,47"/><path d="M22.5,51.8L29.5,51.8"/><path d="M15,50.2L18.3,53.5L15,56.8L11.7,53.5Z" stroke-linejoin="round"/><path d="M17.5,56L22.8,60L29.5,60"/><rect x="12.70" y="63.70" width="5.6" height="5.6" rx="1.6"/><path d="M18.5,66.5L29.5,66.5"/><rect x="5.70" y="74.70" width="5.6" height="5.6" rx="1.6"/><path d="M11.5,77.5L18,77.5L22.8,73L29.5,73"/><path d="M77.8,32.8L84,32.8L88.5,28.5L95.5,28.5"/><rect x="95.70" y="25.70" width="5.6" height="5.6" rx="1.6"/><path d="M77.8,39.7L88.2,39.7"/><rect x="88.40" y="36.90" width="5.6" height="5.6" rx="1.6"/><path d="M77.8,46L84.5,46L89.2,50.2"/><path d="M91.5,49.2L94.8,52.5L91.5,55.8L88.2,52.5Z" stroke-linejoin="round"/><path d="M77.8,54.3L84.5,54.3"/><path d="M77.8,59L84,59L88.5,62.2L95.5,62.2"/><rect x="95.70" y="59.40" width="5.6" height="5.6" rx="1.6"/><path d="M77.8,68.3L86.3,68.3"/><circle cx="88.8" cy="68.3" r="2.5"/><path d="M77.8,73L84,73L88.5,77.5L95.5,77.5"/><rect x="95.70" y="74.70" width="5.6" height="5.6" rx="1.6"/></g><circle cx="122.2" cy="192.9" r="4.3" fill="#fff"/><g fill="none" stroke="#fff" stroke-width="3.9" stroke-linejoin="round"><path d="M130.75,196.9V179.5H150.3Q153.85,179.5 153.85,183.2V196.9M141.85,179.5V196.9"/><path d="M176.6,179.5H163.3Q159.95,179.5 159.95,182.8V183.4Q159.95,186.6 163.3,186.6H171.3Q174.65,186.6 174.65,189.9V191.8Q174.65,195.1 171.3,195.1H158"/><path d="M195.75,179.5H184.1Q180.75,179.5 180.75,182.8V191.8Q180.75,195.1 184.1,195.1H195.75M195.75,177.6V197.6Q195.75,200.9 192.4,200.9H181"/></g><path d="M22.10,56.8V75.8H26.90C33.30,75.8 35.70,71.2 35.70,66.3C35.70,61.4 33.30,56.8 26.90,56.8ZM50.40,56.8H40.90V75.8H50.60M40.90,65.7H50.00" fill="none" stroke="#fff" stroke-opacity="0.82" stroke-width="1.8" stroke-linejoin="miter" stroke-miterlimit="1.5"/></svg>
<div class="t1">Rephraser</div></div>
<div class="nm">Rephraser (DE)</div><div class="md">Mistral-7B-DE-Instruct.gg...</div>
<div class="ch">1 chat</div>
<div class="b1"><svg width="23" height="23" viewBox="0 0 24 24"><path d="M4 17v2a2 2 0 0 0 2 2h12a2 2 0 0 0 2 -2v-2M7 9l5 -5l5 5M12 4l0 12"/></svg></div>
<div class="b2"><svg width="22" height="22" viewBox="0 0 24 24"><circle cx="12" cy="5" r="1.5"/><circle cx="12" cy="12" r="1.5"/><circle cx="12" cy="19" r="1.5"/></svg></div>
</div><div class="card" style="left:514.0px;top:452.0px">
<div class="img"><svg width="220" height="220" viewBox="0 0 220 220"><g transform="translate(95,56)" fill="none" stroke="url(#cg)" stroke-width="1.7" stroke-linecap="round" stroke-linejoin="round"><rect x="32.5" y="32.5" width="42" height="41.5" rx="3.8"/><path d="M43.6,63.5V49A6.45,6.45 0 0 1 56.5,49V63.5M43.6,54.6H56.5M63.2,43V63.5"/><rect x="26.20" y="5.20" width="5.6" height="5.6" rx="1.6"/><path d="M29,11L29,18L33.5,22.5L33.5,29"/><rect x="37.20" y="12.20" width="5.6" height="5.6" rx="1.6"/><path d="M40,18L40,29"/><path d="M52.8,11.5L56.099999999999994,14.8L52.8,18.1L49.5,14.8Z" stroke-linejoin="round"/><path d="M50.6,17.3L46.5,22L46.5,29"/><path d="M54.7,21.8L54.7,29"/><rect x="59.70" y="5.20" width="5.6" height="5.6" rx="1.6"/><path d="M62.5,11L62.5,18L59.5,21.5L59.5,29"/><circle cx="68.8" cy="17.8" r="2.5"/><path d="M68.8,20.3L68.8,29"/><rect x="75.20" y="5.20" width="5.6" height="5.6" rx="1.6"/><path d="M78,11L78,18L73.8,22.5L73.8,29"/><path d="M33.3,77L33.3,84L29,88.3L29,95"/><rect x="26.20" y="95.20" width="5.6" height="5.6" rx="1.6"/><path d="M38.2,77L38.2,86"/><circle cx="38.2" cy="88.5" r="2.5"/><path d="M47.7,77L47.7,84L44.5,88L44.5,95"/><rect x="41.70" y="95.20" width="5.6" height="5.6" rx="1.6"/><path d="M52.2,77L52.2,84"/><path d="M60.3,77L60.3,84L56.3,88.8"/><path d="M54,87.7L57.3,91L54,94.3L50.7,91Z" stroke-linejoin="round"/><path d="M67,77L67,88"/><rect x="64.20" y="88.20" width="5.6" height="5.6" rx="1.6"/><path d="M73.8,77L73.8,84L78,88.3L78,95"/><rect x="75.20" y="95.20" width="5.6" height="5.6" rx="1.6"/><rect x="5.70" y="25.70" width="5.6" height="5.6" rx="1.6"/><path d="M11.5,28.5L18,28.5L22.8,32.8L29.5,32.8"/><circle cx="18" cy="37.8" r="2.5"/><path d="M20.5,37.8L29.5,37.8"/><rect x="5.70" y="41.20" width="5.6" height="5.6" rx="1.6"/><path d="M11.5,44L18,44L22.8,47L29.5,47"/><path d="M22.5,51.8L29.5,51.8"/><path d="M15,50.2L18.3,53.5L15,56.8L11.7,53.5Z" stroke-linejoin="round"/><path d="M17.5,56L22.8,60L29.5,60"/><rect x="12.70" y="63.70" width="5.6" height="5.6" rx="1.6"/><path d="M18.5,66.5L29.5,66.5"/><rect x="5.70" y="74.70" width="5.6" height="5.6" rx="1.6"/><path d="M11.5,77.5L18,77.5L22.8,73L29.5,73"/><path d="M77.8,32.8L84,32.8L88.5,28.5L95.5,28.5"/><rect x="95.70" y="25.70" width="5.6" height="5.6" rx="1.6"/><path d="M77.8,39.7L88.2,39.7"/><rect x="88.40" y="36.90" width="5.6" height="5.6" rx="1.6"/><path d="M77.8,46L84.5,46L89.2,50.2"/><path d="M91.5,49.2L94.8,52.5L91.5,55.8L88.2,52.5Z" stroke-linejoin="round"/><path d="M77.8,54.3L84.5,54.3"/><path d="M77.8,59L84,59L88.5,62.2L95.5,62.2"/><rect x="95.70" y="59.40" width="5.6" height="5.6" rx="1.6"/><path d="M77.8,68.3L86.3,68.3"/><circle cx="88.8" cy="68.3" r="2.5"/><path d="M77.8,73L84,73L88.5,77.5L95.5,77.5"/><rect x="95.70" y="74.70" width="5.6" height="5.6" rx="1.6"/></g><circle cx="122.2" cy="192.9" r="4.3" fill="#fff"/><g fill="none" stroke="#fff" stroke-width="3.9" stroke-linejoin="round"><path d="M130.75,196.9V179.5H150.3Q153.85,179.5 153.85,183.2V196.9M141.85,179.5V196.9"/><path d="M176.6,179.5H163.3Q159.95,179.5 159.95,182.8V183.4Q159.95,186.6 163.3,186.6H171.3Q174.65,186.6 174.65,189.9V191.8Q174.65,195.1 171.3,195.1H158"/><path d="M195.75,179.5H184.1Q180.75,179.5 180.75,182.8V191.8Q180.75,195.1 184.1,195.1H195.75M195.75,177.6V197.6Q195.75,200.9 192.4,200.9H181"/></g><path d="M31.60,56.8H22.10V75.8H31.80M22.10,65.7H31.20M35.60,76.6V56.8L48.50,75.8V56" fill="none" stroke="#fff" stroke-opacity="0.82" stroke-width="1.8" stroke-linejoin="miter" stroke-miterlimit="1.5"/></svg>
<div class="t1">Proofreader</div></div>
<div class="nm">Proofreader (EN)</div><div class="md">Mistral-7B-EN-Instruct.g...</div>
<div class="ch">1 chat</div>
<div class="b1"><svg width="23" height="23" viewBox="0 0 24 24"><path d="M4 17v2a2 2 0 0 0 2 2h12a2 2 0 0 0 2 -2v-2M7 9l5 -5l5 5M12 4l0 12"/></svg></div>
<div class="b2"><svg width="22" height="22" viewBox="0 0 24 24"><circle cx="12" cy="5" r="1.5"/><circle cx="12" cy="12" r="1.5"/><circle cx="12" cy="19" r="1.5"/></svg></div>
</div><div class="card" style="left:756.0px;top:452.0px">
<div class="img"><svg width="220" height="220" viewBox="0 0 220 220"><g transform="translate(95,56)" fill="none" stroke="url(#cg)" stroke-width="1.7" stroke-linecap="round" stroke-linejoin="round"><rect x="32.5" y="32.5" width="42" height="41.5" rx="3.8"/><path d="M43.6,63.5V49A6.45,6.45 0 0 1 56.5,49V63.5M43.6,54.6H56.5M63.2,43V63.5"/><rect x="26.20" y="5.20" width="5.6" height="5.6" rx="1.6"/><path d="M29,11L29,18L33.5,22.5L33.5,29"/><rect x="37.20" y="12.20" width="5.6" height="5.6" rx="1.6"/><path d="M40,18L40,29"/><path d="M52.8,11.5L56.099999999999994,14.8L52.8,18.1L49.5,14.8Z" stroke-linejoin="round"/><path d="M50.6,17.3L46.5,22L46.5,29"/><path d="M54.7,21.8L54.7,29"/><rect x="59.70" y="5.20" width="5.6" height="5.6" rx="1.6"/><path d="M62.5,11L62.5,18L59.5,21.5L59.5,29"/><circle cx="68.8" cy="17.8" r="2.5"/><path d="M68.8,20.3L68.8,29"/><rect x="75.20" y="5.20" width="5.6" height="5.6" rx="1.6"/><path d="M78,11L78,18L73.8,22.5L73.8,29"/><path d="M33.3,77L33.3,84L29,88.3L29,95"/><rect x="26.20" y="95.20" width="5.6" height="5.6" rx="1.6"/><path d="M38.2,77L38.2,86"/><circle cx="38.2" cy="88.5" r="2.5"/><path d="M47.7,77L47.7,84L44.5,88L44.5,95"/><rect x="41.70" y="95.20" width="5.6" height="5.6" rx="1.6"/><path d="M52.2,77L52.2,84"/><path d="M60.3,77L60.3,84L56.3,88.8"/><path d="M54,87.7L57.3,91L54,94.3L50.7,91Z" stroke-linejoin="round"/><path d="M67,77L67,88"/><rect x="64.20" y="88.20" width="5.6" height="5.6" rx="1.6"/><path d="M73.8,77L73.8,84L78,88.3L78,95"/><rect x="75.20" y="95.20" width="5.6" height="5.6" rx="1.6"/><rect x="5.70" y="25.70" width="5.6" height="5.6" rx="1.6"/><path d="M11.5,28.5L18,28.5L22.8,32.8L29.5,32.8"/><circle cx="18" cy="37.8" r="2.5"/><path d="M20.5,37.8L29.5,37.8"/><rect x="5.70" y="41.20" width="5.6" height="5.6" rx="1.6"/><path d="M11.5,44L18,44L22.8,47L29.5,47"/><path d="M22.5,51.8L29.5,51.8"/><path d="M15,50.2L18.3,53.5L15,56.8L11.7,53.5Z" stroke-linejoin="round"/><path d="M17.5,56L22.8,60L29.5,60"/><rect x="12.70" y="63.70" width="5.6" height="5.6" rx="1.6"/><path d="M18.5,66.5L29.5,66.5"/><rect x="5.70" y="74.70" width="5.6" height="5.6" rx="1.6"/><path d="M11.5,77.5L18,77.5L22.8,73L29.5,73"/><path d="M77.8,32.8L84,32.8L88.5,28.5L95.5,28.5"/><rect x="95.70" y="25.70" width="5.6" height="5.6" rx="1.6"/><path d="M77.8,39.7L88.2,39.7"/><rect x="88.40" y="36.90" width="5.6" height="5.6" rx="1.6"/><path d="M77.8,46L84.5,46L89.2,50.2"/><path d="M91.5,49.2L94.8,52.5L91.5,55.8L88.2,52.5Z" stroke-linejoin="round"/><path d="M77.8,54.3L84.5,54.3"/><path d="M77.8,59L84,59L88.5,62.2L95.5,62.2"/><rect x="95.70" y="59.40" width="5.6" height="5.6" rx="1.6"/><path d="M77.8,68.3L86.3,68.3"/><circle cx="88.8" cy="68.3" r="2.5"/><path d="M77.8,73L84,73L88.5,77.5L95.5,77.5"/><rect x="95.70" y="74.70" width="5.6" height="5.6" rx="1.6"/></g><circle cx="122.2" cy="192.9" r="4.3" fill="#fff"/><g fill="none" stroke="#fff" stroke-width="3.9" stroke-linejoin="round"><path d="M130.75,196.9V179.5H150.3Q153.85,179.5 153.85,183.2V196.9M141.85,179.5V196.9"/><path d="M176.6,179.5H163.3Q159.95,179.5 159.95,182.8V183.4Q159.95,186.6 163.3,186.6H171.3Q174.65,186.6 174.65,189.9V191.8Q174.65,195.1 171.3,195.1H158"/><path d="M195.75,179.5H184.1Q180.75,179.5 180.75,182.8V191.8Q180.75,195.1 184.1,195.1H195.75M195.75,177.6V197.6Q195.75,200.9 192.4,200.9H181"/></g><path d="M31.60,56.8H22.10V75.8H31.80M22.10,65.7H31.20M35.60,76.6V56.8L48.50,75.8V56" fill="none" stroke="#fff" stroke-opacity="0.82" stroke-width="1.8" stroke-linejoin="miter" stroke-miterlimit="1.5"/></svg>
<div class="t1">Rephraser</div></div>
<div class="nm">Rephraser (EN)</div><div class="md">Mistral-7B-EN-Instruct.g...</div>
<div class="ch">1 chat</div>
<div class="b1"><svg width="23" height="23" viewBox="0 0 24 24"><path d="M4 17v2a2 2 0 0 0 2 2h12a2 2 0 0 0 2 -2v-2M7 9l5 -5l5 5M12 4l0 12"/></svg></div>
<div class="b2"><svg width="22" height="22" viewBox="0 0 24 24"><circle cx="12" cy="5" r="1.5"/><circle cx="12" cy="12" r="1.5"/><circle cx="12" cy="19" r="1.5"/></svg></div>
</div><div class="card" style="left:997.0px;top:452.0px">
<div class="img"><svg width="220" height="220" viewBox="0 0 220 220"><g transform="translate(95,56)" fill="none" stroke="url(#cg)" stroke-width="1.7" stroke-linecap="round" stroke-linejoin="round"><rect x="32.5" y="32.5" width="42" height="41.5" rx="3.8"/><path d="M43.6,63.5V49A6.45,6.45 0 0 1 56.5,49V63.5M43.6,54.6H56.5M63.2,43V63.5"/><rect x="26.20" y="5.20" width="5.6" height="5.6" rx="1.6"/><path d="M29,11L29,18L33.5,22.5L33.5,29"/><rect x="37.20" y="12.20" width="5.6" height="5.6" rx="1.6"/><path d="M40,18L40,29"/><path d="M52.8,11.5L56.099999999999994,14.8L52.8,18.1L49.5,14.8Z" stroke-linejoin="round"/><path d="M50.6,17.3L46.5,22L46.5,29"/><path d="M54.7,21.8L54.7,29"/><rect x="59.70" y="5.20" width="5.6" height="5.6" rx="1.6"/><path d="M62.5,11L62.5,18L59.5,21.5L59.5,29"/><circle cx="68.8" cy="17.8" r="2.5"/><path d="M68.8,20.3L68.8,29"/><rect x="75.20" y="5.20" width="5.6" height="5.6" rx="1.6"/><path d="M78,11L78,18L73.8,22.5L73.8,29"/><path d="M33.3,77L33.3,84L29,88.3L29,95"/><rect x="26.20" y="95.20" width="5.6" height="5.6" rx="1.6"/><path d="M38.2,77L38.2,86"/><circle cx="38.2" cy="88.5" r="2.5"/><path d="M47.7,77L47.7,84L44.5,88L44.5,95"/><rect x="41.70" y="95.20" width="5.6" height="5.6" rx="1.6"/><path d="M52.2,77L52.2,84"/><path d="M60.3,77L60.3,84L56.3,88.8"/><path d="M54,87.7L57.3,91L54,94.3L50.7,91Z" stroke-linejoin="round"/><path d="M67,77L67,88"/><rect x="64.20" y="88.20" width="5.6" height="5.6" rx="1.6"/><path d="M73.8,77L73.8,84L78,88.3L78,95"/><rect x="75.20" y="95.20" width="5.6" height="5.6" rx="1.6"/><rect x="5.70" y="25.70" width="5.6" height="5.6" rx="1.6"/><path d="M11.5,28.5L18,28.5L22.8,32.8L29.5,32.8"/><circle cx="18" cy="37.8" r="2.5"/><path d="M20.5,37.8L29.5,37.8"/><rect x="5.70" y="41.20" width="5.6" height="5.6" rx="1.6"/><path d="M11.5,44L18,44L22.8,47L29.5,47"/><path d="M22.5,51.8L29.5,51.8"/><path d="M15,50.2L18.3,53.5L15,56.8L11.7,53.5Z" stroke-linejoin="round"/><path d="M17.5,56L22.8,60L29.5,60"/><rect x="12.70" y="63.70" width="5.6" height="5.6" rx="1.6"/><path d="M18.5,66.5L29.5,66.5"/><rect x="5.70" y="74.70" width="5.6" height="5.6" rx="1.6"/><path d="M11.5,77.5L18,77.5L22.8,73L29.5,73"/><path d="M77.8,32.8L84,32.8L88.5,28.5L95.5,28.5"/><rect x="95.70" y="25.70" width="5.6" height="5.6" rx="1.6"/><path d="M77.8,39.7L88.2,39.7"/><rect x="88.40" y="36.90" width="5.6" height="5.6" rx="1.6"/><path d="M77.8,46L84.5,46L89.2,50.2"/><path d="M91.5,49.2L94.8,52.5L91.5,55.8L88.2,52.5Z" stroke-linejoin="round"/><path d="M77.8,54.3L84.5,54.3"/><path d="M77.8,59L84,59L88.5,62.2L95.5,62.2"/><rect x="95.70" y="59.40" width="5.6" height="5.6" rx="1.6"/><path d="M77.8,68.3L86.3,68.3"/><circle cx="88.8" cy="68.3" r="2.5"/><path d="M77.8,73L84,73L88.5,77.5L95.5,77.5"/><rect x="95.70" y="74.70" width="5.6" height="5.6" rx="1.6"/></g><circle cx="122.2" cy="192.9" r="4.3" fill="#fff"/><g fill="none" stroke="#fff" stroke-width="3.9" stroke-linejoin="round"><path d="M130.75,196.9V179.5H150.3Q153.85,179.5 153.85,183.2V196.9M141.85,179.5V196.9"/><path d="M176.6,179.5H163.3Q159.95,179.5 159.95,182.8V183.4Q159.95,186.6 163.3,186.6H171.3Q174.65,186.6 174.65,189.9V191.8Q174.65,195.1 171.3,195.1H158"/><path d="M195.75,179.5H184.1Q180.75,179.5 180.75,182.8V191.8Q180.75,195.1 184.1,195.1H195.75M195.75,177.6V197.6Q195.75,200.9 192.4,200.9H181"/></g><path d="M22.10,56.8V75.8H26.90C33.30,75.8 35.70,71.2 35.70,66.3C35.70,61.4 33.30,56.8 26.90,56.8ZM50.40,56.8H40.90V75.8H50.60M40.90,65.7H50.00" fill="none" stroke="#fff" stroke-opacity="0.82" stroke-width="1.8" stroke-linejoin="miter" stroke-miterlimit="1.5"/></svg>
<div class="t1">Synonymizer</div></div>
<div class="nm">Synonymizer (DE)</div><div class="md">Mistral-7B-DE-Instruct.gg...</div>
<div class="ch">1 chat</div>
<div class="b1"><svg width="23" height="23" viewBox="0 0 24 24"><path d="M4 17v2a2 2 0 0 0 2 2h12a2 2 0 0 0 2 -2v-2M7 9l5 -5l5 5M12 4l0 12"/></svg></div>
<div class="b2"><svg width="22" height="22" viewBox="0 0 24 24"><circle cx="12" cy="5" r="1.5"/><circle cx="12" cy="12" r="1.5"/><circle cx="12" cy="19" r="1.5"/></svg></div>
</div><div class="card" style="left:1239.0px;top:452.0px">
<div class="img"><svg width="220" height="220" viewBox="0 0 220 220"><g transform="translate(95,56)" fill="none" stroke="url(#cg)" stroke-width="1.7" stroke-linecap="round" stroke-linejoin="round"><rect x="32.5" y="32.5" width="42" height="41.5" rx="3.8"/><path d="M43.6,63.5V49A6.45,6.45 0 0 1 56.5,49V63.5M43.6,54.6H56.5M63.2,43V63.5"/><rect x="26.20" y="5.20" width="5.6" height="5.6" rx="1.6"/><path d="M29,11L29,18L33.5,22.5L33.5,29"/><rect x="37.20" y="12.20" width="5.6" height="5.6" rx="1.6"/><path d="M40,18L40,29"/><path d="M52.8,11.5L56.099999999999994,14.8L52.8,18.1L49.5,14.8Z" stroke-linejoin="round"/><path d="M50.6,17.3L46.5,22L46.5,29"/><path d="M54.7,21.8L54.7,29"/><rect x="59.70" y="5.20" width="5.6" height="5.6" rx="1.6"/><path d="M62.5,11L62.5,18L59.5,21.5L59.5,29"/><circle cx="68.8" cy="17.8" r="2.5"/><path d="M68.8,20.3L68.8,29"/><rect x="75.20" y="5.20" width="5.6" height="5.6" rx="1.6"/><path d="M78,11L78,18L73.8,22.5L73.8,29"/><path d="M33.3,77L33.3,84L29,88.3L29,95"/><rect x="26.20" y="95.20" width="5.6" height="5.6" rx="1.6"/><path d="M38.2,77L38.2,86"/><circle cx="38.2" cy="88.5" r="2.5"/><path d="M47.7,77L47.7,84L44.5,88L44.5,95"/><rect x="41.70" y="95.20" width="5.6" height="5.6" rx="1.6"/><path d="M52.2,77L52.2,84"/><path d="M60.3,77L60.3,84L56.3,88.8"/><path d="M54,87.7L57.3,91L54,94.3L50.7,91Z" stroke-linejoin="round"/><path d="M67,77L67,88"/><rect x="64.20" y="88.20" width="5.6" height="5.6" rx="1.6"/><path d="M73.8,77L73.8,84L78,88.3L78,95"/><rect x="75.20" y="95.20" width="5.6" height="5.6" rx="1.6"/><rect x="5.70" y="25.70" width="5.6" height="5.6" rx="1.6"/><path d="M11.5,28.5L18,28.5L22.8,32.8L29.5,32.8"/><circle cx="18" cy="37.8" r="2.5"/><path d="M20.5,37.8L29.5,37.8"/><rect x="5.70" y="41.20" width="5.6" height="5.6" rx="1.6"/><path d="M11.5,44L18,44L22.8,47L29.5,47"/><path d="M22.5,51.8L29.5,51.8"/><path d="M15,50.2L18.3,53.5L15,56.8L11.7,53.5Z" stroke-linejoin="round"/><path d="M17.5,56L22.8,60L29.5,60"/><rect x="12.70" y="63.70" width="5.6" height="5.6" rx="1.6"/><path d="M18.5,66.5L29.5,66.5"/><rect x="5.70" y="74.70" width="5.6" height="5.6" rx="1.6"/><path d="M11.5,77.5L18,77.5L22.8,73L29.5,73"/><path d="M77.8,32.8L84,32.8L88.5,28.5L95.5,28.5"/><rect x="95.70" y="25.70" width="5.6" height="5.6" rx="1.6"/><path d="M77.8,39.7L88.2,39.7"/><rect x="88.40" y="36.90" width="5.6" height="5.6" rx="1.6"/><path d="M77.8,46L84.5,46L89.2,50.2"/><path d="M91.5,49.2L94.8,52.5L91.5,55.8L88.2,52.5Z" stroke-linejoin="round"/><path d="M77.8,54.3L84.5,54.3"/><path d="M77.8,59L84,59L88.5,62.2L95.5,62.2"/><rect x="95.70" y="59.40" width="5.6" height="5.6" rx="1.6"/><path d="M77.8,68.3L86.3,68.3"/><circle cx="88.8" cy="68.3" r="2.5"/><path d="M77.8,73L84,73L88.5,77.5L95.5,77.5"/><rect x="95.70" y="74.70" width="5.6" height="5.6" rx="1.6"/></g><circle cx="122.2" cy="192.9" r="4.3" fill="#fff"/><g fill="none" stroke="#fff" stroke-width="3.9" stroke-linejoin="round"><path d="M130.75,196.9V179.5H150.3Q153.85,179.5 153.85,183.2V196.9M141.85,179.5V196.9"/><path d="M176.6,179.5H163.3Q159.95,179.5 159.95,182.8V183.4Q159.95,186.6 163.3,186.6H171.3Q174.65,186.6 174.65,189.9V191.8Q174.65,195.1 171.3,195.1H158"/><path d="M195.75,179.5H184.1Q180.75,179.5 180.75,182.8V191.8Q180.75,195.1 184.1,195.1H195.75M195.75,177.6V197.6Q195.75,200.9 192.4,200.9H181"/></g><path d="M22.10,56.8V75.8H26.90C33.30,75.8 35.70,71.2 35.70,66.3C35.70,61.4 33.30,56.8 26.90,56.8ZM50.40,56.8H40.90V75.8H50.60M40.90,65.7H50.00" fill="none" stroke="#fff" stroke-opacity="0.82" stroke-width="1.8" stroke-linejoin="miter" stroke-miterlimit="1.5"/></svg>
<div class="t1">Antonymizer</div></div>
<div class="nm">Antonymizer (DE)</div><div class="md">Mistral-7B-DE-Instruct.gg...</div>
<div class="ch">1 chat</div>
<div class="b1"><svg width="23" height="23" viewBox="0 0 24 24"><path d="M4 17v2a2 2 0 0 0 2 2h12a2 2 0 0 0 2 -2v-2M7 9l5 -5l5 5M12 4l0 12"/></svg></div>
<div class="b2"><svg width="22" height="22" viewBox="0 0 24 24"><circle cx="12" cy="5" r="1.5"/><circle cx="12" cy="12" r="1.5"/><circle cx="12" cy="19" r="1.5"/></svg></div>
</div><div class="card" style="left:30.0px;top:816.0px">
<div class="img"><svg width="220" height="220" viewBox="0 0 220 220"><g transform="translate(95,56)" fill="none" stroke="url(#cg)" stroke-width="1.7" stroke-linecap="round" stroke-linejoin="round"><rect x="32.5" y="32.5" width="42" height="41.5" rx="3.8"/><path d="M43.6,63.5V49A6.45,6.45 0 0 1 56.5,49V63.5M43.6,54.6H56.5M63.2,43V63.5"/><rect x="26.20" y="5.20" width="5.6" height="5.6" rx="1.6"/><path d="M29,11L29,18L33.5,22.5L33.5,29"/><rect x="37.20" y="12.20" width="5.6" height="5.6" rx="1.6"/><path d="M40,18L40,29"/><path d="M52.8,11.5L56.099999999999994,14.8L52.8,18.1L49.5,14.8Z" stroke-linejoin="round"/><path d="M50.6,17.3L46.5,22L46.5,29"/><path d="M54.7,21.8L54.7,29"/><rect x="59.70" y="5.20" width="5.6" height="5.6" rx="1.6"/><path d="M62.5,11L62.5,18L59.5,21.5L59.5,29"/><circle cx="68.8" cy="17.8" r="2.5"/><path d="M68.8,20.3L68.8,29"/><rect x="75.20" y="5.20" width="5.6" height="5.6" rx="1.6"/><path d="M78,11L78,18L73.8,22.5L73.8,29"/><path d="M33.3,77L33.3,84L29,88.3L29,95"/><rect x="26.20" y="95.20" width="5.6" height="5.6" rx="1.6"/><path d="M38.2,77L38.2,86"/><circle cx="38.2" cy="88.5" r="2.5"/><path d="M47.7,77L47.7,84L44.5,88L44.5,95"/><rect x="41.70" y="95.20" width="5.6" height="5.6" rx="1.6"/><path d="M52.2,77L52.2,84"/><path d="M60.3,77L60.3,84L56.3,88.8"/><path d="M54,87.7L57.3,91L54,94.3L50.7,91Z" stroke-linejoin="round"/><path d="M67,77L67,88"/><rect x="64.20" y="88.20" width="5.6" height="5.6" rx="1.6"/><path d="M73.8,77L73.8,84L78,88.3L78,95"/><rect x="75.20" y="95.20" width="5.6" height="5.6" rx="1.6"/><rect x="5.70" y="25.70" width="5.6" height="5.6" rx="1.6"/><path d="M11.5,28.5L18,28.5L22.8,32.8L29.5,32.8"/><circle cx="18" cy="37.8" r="2.5"/><path d="M20.5,37.8L29.5,37.8"/><rect x="5.70" y="41.20" width="5.6" height="5.6" rx="1.6"/><path d="M11.5,44L18,44L22.8,47L29.5,47"/><path d="M22.5,51.8L29.5,51.8"/><path d="M15,50.2L18.3,53.5L15,56.8L11.7,53.5Z" stroke-linejoin="round"/><path d="M17.5,56L22.8,60L29.5,60"/><rect x="12.70" y="63.70" width="5.6" height="5.6" rx="1.6"/><path d="M18.5,66.5L29.5,66.5"/><rect x="5.70" y="74.70" width="5.6" height="5.6" rx="1.6"/><path d="M11.5,77.5L18,77.5L22.8,73L29.5,73"/><path d="M77.8,32.8L84,32.8L88.5,28.5L95.5,28.5"/><rect x="95.70" y="25.70" width="5.6" height="5.6" rx="1.6"/><path d="M77.8,39.7L88.2,39.7"/><rect x="88.40" y="36.90" width="5.6" height="5.6" rx="1.6"/><path d="M77.8,46L84.5,46L89.2,50.2"/><path d="M91.5,49.2L94.8,52.5L91.5,55.8L88.2,52.5Z" stroke-linejoin="round"/><path d="M77.8,54.3L84.5,54.3"/><path d="M77.8,59L84,59L88.5,62.2L95.5,62.2"/><rect x="95.70" y="59.40" width="5.6" height="5.6" rx="1.6"/><path d="M77.8,68.3L86.3,68.3"/><circle cx="88.8" cy="68.3" r="2.5"/><path d="M77.8,73L84,73L88.5,77.5L95.5,77.5"/><rect x="95.70" y="74.70" width="5.6" height="5.6" rx="1.6"/></g><circle cx="122.2" cy="192.9" r="4.3" fill="#fff"/><g fill="none" stroke="#fff" stroke-width="3.9" stroke-linejoin="round"><path d="M130.75,196.9V179.5H150.3Q153.85,179.5 153.85,183.2V196.9M141.85,179.5V196.9"/><path d="M176.6,179.5H163.3Q159.95,179.5 159.95,182.8V183.4Q159.95,186.6 163.3,186.6H171.3Q174.65,186.6 174.65,189.9V191.8Q174.65,195.1 171.3,195.1H158"/><path d="M195.75,179.5H184.1Q180.75,179.5 180.75,182.8V191.8Q180.75,195.1 184.1,195.1H195.75M195.75,177.6V197.6Q195.75,200.9 192.4,200.9H181"/></g><path d="M31.60,56.8H22.10V75.8H31.80M22.10,65.7H31.20M35.60,76.6V56.8L48.50,75.8V56" fill="none" stroke="#fff" stroke-opacity="0.82" stroke-width="1.8" stroke-linejoin="miter" stroke-miterlimit="1.5"/></svg>
<div class="t1">Synonymizer</div></div>
<div class="nm">Synonymizer (EN)</div><div class="md">Mistral-7B-EN-Instruct.g...</div>
<div class="ch">1 chat</div>
<div class="b1"><svg width="23" height="23" viewBox="0 0 24 24"><path d="M4 17v2a2 2 0 0 0 2 2h12a2 2 0 0 0 2 -2v-2M7 9l5 -5l5 5M12 4l0 12"/></svg></div>
<div class="b2"><svg width="22" height="22" viewBox="0 0 24 24"><circle cx="12" cy="5" r="1.5"/><circle cx="12" cy="12" r="1.5"/><circle cx="12" cy="19" r="1.5"/></svg></div>
</div><div class="card" style="left:272.0px;top:816.0px">
<div class="img"><svg width="220" height="220" viewBox="0 0 220 220"><g transform="translate(95,56)" fill="none" stroke="url(#cg)" stroke-width="1.7" stroke-linecap="round" stroke-linejoin="round"><rect x="32.5" y="32.5" width="42" height="41.5" rx="3.8"/><path d="M43.6,63.5V49A6.45,6.45 0 0 1 56.5,49V63.5M43.6,54.6H56.5M63.2,43V63.5"/><rect x="26.20" y="5.20" width="5.6" height="5.6" rx="1.6"/><path d="M29,11L29,18L33.5,22.5L33.5,29"/><rect x="37.20" y="12.20" width="5.6" height="5.6" rx="1.6"/><path d="M40,18L40,29"/><path d="M52.8,11.5L56.099999999999994,14.8L52.8,18.1L49.5,14.8Z" stroke-linejoin="round"/><path d="M50.6,17.3L46.5,22L46.5,29"/><path d="M54.7,21.8L54.7,29"/><rect x="59.70" y="5.20" width="5.6" height="5.6" rx="1.6"/><path d="M62.5,11L62.5,18L59.5,21.5L59.5,29"/><circle cx="68.8" cy="17.8" r="2.5"/><path d="M68.8,20.3L68.8,29"/><rect x="75.20" y="5.20" width="5.6" height="5.6" rx="1.6"/><path d="M78,11L78,18L73.8,22.5L73.8,29"/><path d="M33.3,77L33.3,84L29,88.3L29,95"/><rect x="26.20" y="95.20" width="5.6" height="5.6" rx="1.6"/><path d="M38.2,77L38.2,86"/><circle cx="38.2" cy="88.5" r="2.5"/><path d="M47.7,77L47.7,84L44.5,88L44.5,95"/><rect x="41.70" y="95.20" width="5.6" height="5.6" rx="1.6"/><path d="M52.2,77L52.2,84"/><path d="M60.3,77L60.3,84L56.3,88.8"/><path d="M54,87.7L57.3,91L54,94.3L50.7,91Z" stroke-linejoin="round"/><path d="M67,77L67,88"/><rect x="64.20" y="88.20" width="5.6" height="5.6" rx="1.6"/><path d="M73.8,77L73.8,84L78,88.3L78,95"/><rect x="75.20" y="95.20" width="5.6" height="5.6" rx="1.6"/><rect x="5.70" y="25.70" width="5.6" height="5.6" rx="1.6"/><path d="M11.5,28.5L18,28.5L22.8,32.8L29.5,32.8"/><circle cx="18" cy="37.8" r="2.5"/><path d="M20.5,37.8L29.5,37.8"/><rect x="5.70" y="41.20" width="5.6" height="5.6" rx="1.6"/><path d="M11.5,44L18,44L22.8,47L29.5,47"/><path d="M22.5,51.8L29.5,51.8"/><path d="M15,50.2L18.3,53.5L15,56.8L11.7,53.5Z" stroke-linejoin="round"/><path d="M17.5,56L22.8,60L29.5,60"/><rect x="12.70" y="63.70" width="5.6" height="5.6" rx="1.6"/><path d="M18.5,66.5L29.5,66.5"/><rect x="5.70" y="74.70" width="5.6" height="5.6" rx="1.6"/><path d="M11.5,77.5L18,77.5L22.8,73L29.5,73"/><path d="M77.8,32.8L84,32.8L88.5,28.5L95.5,28.5"/><rect x="95.70" y="25.70" width="5.6" height="5.6" rx="1.6"/><path d="M77.8,39.7L88.2,39.7"/><rect x="88.40" y="36.90" width="5.6" height="5.6" rx="1.6"/><path d="M77.8,46L84.5,46L89.2,50.2"/><path d="M91.5,49.2L94.8,52.5L91.5,55.8L88.2,52.5Z" stroke-linejoin="round"/><path d="M77.8,54.3L84.5,54.3"/><path d="M77.8,59L84,59L88.5,62.2L95.5,62.2"/><rect x="95.70" y="59.40" width="5.6" height="5.6" rx="1.6"/><path d="M77.8,68.3L86.3,68.3"/><circle cx="88.8" cy="68.3" r="2.5"/><path d="M77.8,73L84,73L88.5,77.5L95.5,77.5"/><rect x="95.70" y="74.70" width="5.6" height="5.6" rx="1.6"/></g><circle cx="122.2" cy="192.9" r="4.3" fill="#fff"/><g fill="none" stroke="#fff" stroke-width="3.9" stroke-linejoin="round"><path d="M130.75,196.9V179.5H150.3Q153.85,179.5 153.85,183.2V196.9M141.85,179.5V196.9"/><path d="M176.6,179.5H163.3Q159.95,179.5 159.95,182.8V183.4Q159.95,186.6 163.3,186.6H171.3Q174.65,186.6 174.65,189.9V191.8Q174.65,195.1 171.3,195.1H158"/><path d="M195.75,179.5H184.1Q180.75,179.5 180.75,182.8V191.8Q180.75,195.1 184.1,195.1H195.75M195.75,177.6V197.6Q195.75,200.9 192.4,200.9H181"/></g><path d="M31.60,56.8H22.10V75.8H31.80M22.10,65.7H31.20M35.60,76.6V56.8L48.50,75.8V56" fill="none" stroke="#fff" stroke-opacity="0.82" stroke-width="1.8" stroke-linejoin="miter" stroke-miterlimit="1.5"/></svg>
<div class="t1">Antonymizer</div></div>
<div class="nm">Antonymizer (EN)</div><div class="md">Mistral-7B-EN-Instruct.g...</div>
<div class="ch">1 chat</div>
<div class="b1"><svg width="23" height="23" viewBox="0 0 24 24"><path d="M4 17v2a2 2 0 0 0 2 2h12a2 2 0 0 0 2 -2v-2M7 9l5 -5l5 5M12 4l0 12"/></svg></div>
<div class="b2"><svg width="22" height="22" viewBox="0 0 24 24"><circle cx="12" cy="5" r="1.5"/><circle cx="12" cy="12" r="1.5"/><circle cx="12" cy="19" r="1.5"/></svg></div>
</div><div class="card" style="left:514.0px;top:816.0px">
<div class="img"><svg width="220" height="220" viewBox="0 0 220 220"><g transform="translate(95,56)" fill="none" stroke="url(#cg)" stroke-width="1.7" stroke-linecap="round" stroke-linejoin="round"><rect x="32.5" y="32.5" width="42" height="41.5" rx="3.8"/><path d="M43.6,63.5V49A6.45,6.45 0 0 1 56.5,49V63.5M43.6,54.6H56.5M63.2,43V63.5"/><rect x="26.20" y="5.20" width="5.6" height="5.6" rx="1.6"/><path d="M29,11L29,18L33.5,22.5L33.5,29"/><rect x="37.20" y="12.20" width="5.6" height="5.6" rx="1.6"/><path d="M40,18L40,29"/><path d="M52.8,11.5L56.099999999999994,14.8L52.8,18.1L49.5,14.8Z" stroke-linejoin="round"/><path d="M50.6,17.3L46.5,22L46.5,29"/><path d="M54.7,21.8L54.7,29"/><rect x="59.70" y="5.20" width="5.6" height="5.6" rx="1.6"/><path d="M62.5,11L62.5,18L59.5,21.5L59.5,29"/><circle cx="68.8" cy="17.8" r="2.5"/><path d="M68.8,20.3L68.8,29"/><rect x="75.20" y="5.20" width="5.6" height="5.6" rx="1.6"/><path d="M78,11L78,18L73.8,22.5L73.8,29"/><path d="M33.3,77L33.3,84L29,88.3L29,95"/><rect x="26.20" y="95.20" width="5.6" height="5.6" rx="1.6"/><path d="M38.2,77L38.2,86"/><circle cx="38.2" cy="88.5" r="2.5"/><path d="M47.7,77L47.7,84L44.5,88L44.5,95"/><rect x="41.70" y="95.20" width="5.6" height="5.6" rx="1.6"/><path d="M52.2,77L52.2,84"/><path d="M60.3,77L60.3,84L56.3,88.8"/><path d="M54,87.7L57.3,91L54,94.3L50.7,91Z" stroke-linejoin="round"/><path d="M67,77L67,88"/><rect x="64.20" y="88.20" width="5.6" height="5.6" rx="1.6"/><path d="M73.8,77L73.8,84L78,88.3L78,95"/><rect x="75.20" y="95.20" width="5.6" height="5.6" rx="1.6"/><rect x="5.70" y="25.70" width="5.6" height="5.6" rx="1.6"/><path d="M11.5,28.5L18,28.5L22.8,32.8L29.5,32.8"/><circle cx="18" cy="37.8" r="2.5"/><path d="M20.5,37.8L29.5,37.8"/><rect x="5.70" y="41.20" width="5.6" height="5.6" rx="1.6"/><path d="M11.5,44L18,44L22.8,47L29.5,47"/><path d="M22.5,51.8L29.5,51.8"/><path d="M15,50.2L18.3,53.5L15,56.8L11.7,53.5Z" stroke-linejoin="round"/><path d="M17.5,56L22.8,60L29.5,60"/><rect x="12.70" y="63.70" width="5.6" height="5.6" rx="1.6"/><path d="M18.5,66.5L29.5,66.5"/><rect x="5.70" y="74.70" width="5.6" height="5.6" rx="1.6"/><path d="M11.5,77.5L18,77.5L22.8,73L29.5,73"/><path d="M77.8,32.8L84,32.8L88.5,28.5L95.5,28.5"/><rect x="95.70" y="25.70" width="5.6" height="5.6" rx="1.6"/><path d="M77.8,39.7L88.2,39.7"/><rect x="88.40" y="36.90" width="5.6" height="5.6" rx="1.6"/><path d="M77.8,46L84.5,46L89.2,50.2"/><path d="M91.5,49.2L94.8,52.5L91.5,55.8L88.2,52.5Z" stroke-linejoin="round"/><path d="M77.8,54.3L84.5,54.3"/><path d="M77.8,59L84,59L88.5,62.2L95.5,62.2"/><rect x="95.70" y="59.40" width="5.6" height="5.6" rx="1.6"/><path d="M77.8,68.3L86.3,68.3"/><circle cx="88.8" cy="68.3" r="2.5"/><path d="M77.8,73L84,73L88.5,77.5L95.5,77.5"/><rect x="95.70" y="74.70" width="5.6" height="5.6" rx="1.6"/></g><circle cx="122.2" cy="192.9" r="4.3" fill="#fff"/><g fill="none" stroke="#fff" stroke-width="3.9" stroke-linejoin="round"><path d="M130.75,196.9V179.5H150.3Q153.85,179.5 153.85,183.2V196.9M141.85,179.5V196.9"/><path d="M176.6,179.5H163.3Q159.95,179.5 159.95,182.8V183.4Q159.95,186.6 163.3,186.6H171.3Q174.65,186.6 174.65,189.9V191.8Q174.65,195.1 171.3,195.1H158"/><path d="M195.75,179.5H184.1Q180.75,179.5 180.75,182.8V191.8Q180.75,195.1 184.1,195.1H195.75M195.75,177.6V197.6Q195.75,200.9 192.4,200.9H181"/></g><path d="M31.60,56.8H22.10V75.8H31.80M22.10,65.7H31.20M35.60,76.6V56.8L48.50,75.8V56M51.70,68.3H59.00M62.00,56.8V75.8H66.80C73.20,75.8 75.60,71.2 75.60,66.3C75.60,61.4 73.20,56.8 66.80,56.8ZM90.30,56.8H80.80V75.8H90.50M80.80,65.7H89.90" fill="none" stroke="#fff" stroke-opacity="0.82" stroke-width="1.8" stroke-linejoin="miter" stroke-miterlimit="1.5"/></svg>
<div class="t1">Translator</div></div>
<div class="nm">Translator (EN-DE)</div><div class="md">Mistral-7B-EN-Instruct.g...</div>
<div class="ch">1 chat</div>
<div class="b1"><svg width="23" height="23" viewBox="0 0 24 24"><path d="M4 17v2a2 2 0 0 0 2 2h12a2 2 0 0 0 2 -2v-2M7 9l5 -5l5 5M12 4l0 12"/></svg></div>
<div class="b2"><svg width="22" height="22" viewBox="0 0 24 24"><circle cx="12" cy="5" r="1.5"/><circle cx="12" cy="12" r="1.5"/><circle cx="12" cy="19" r="1.5"/></svg></div>
</div><div class="card" style="left:756.0px;top:816.0px">
<div class="img"><svg width="220" height="220" viewBox="0 0 220 220"><g transform="translate(95,56)" fill="none" stroke="url(#cg)" stroke-width="1.7" stroke-linecap="round" stroke-linejoin="round"><rect x="32.5" y="32.5" width="42" height="41.5" rx="3.8"/><path d="M43.6,63.5V49A6.45,6.45 0 0 1 56.5,49V63.5M43.6,54.6H56.5M63.2,43V63.5"/><rect x="26.20" y="5.20" width="5.6" height="5.6" rx="1.6"/><path d="M29,11L29,18L33.5,22.5L33.5,29"/><rect x="37.20" y="12.20" width="5.6" height="5.6" rx="1.6"/><path d="M40,18L40,29"/><path d="M52.8,11.5L56.099999999999994,14.8L52.8,18.1L49.5,14.8Z" stroke-linejoin="round"/><path d="M50.6,17.3L46.5,22L46.5,29"/><path d="M54.7,21.8L54.7,29"/><rect x="59.70" y="5.20" width="5.6" height="5.6" rx="1.6"/><path d="M62.5,11L62.5,18L59.5,21.5L59.5,29"/><circle cx="68.8" cy="17.8" r="2.5"/><path d="M68.8,20.3L68.8,29"/><rect x="75.20" y="5.20" width="5.6" height="5.6" rx="1.6"/><path d="M78,11L78,18L73.8,22.5L73.8,29"/><path d="M33.3,77L33.3,84L29,88.3L29,95"/><rect x="26.20" y="95.20" width="5.6" height="5.6" rx="1.6"/><path d="M38.2,77L38.2,86"/><circle cx="38.2" cy="88.5" r="2.5"/><path d="M47.7,77L47.7,84L44.5,88L44.5,95"/><rect x="41.70" y="95.20" width="5.6" height="5.6" rx="1.6"/><path d="M52.2,77L52.2,84"/><path d="M60.3,77L60.3,84L56.3,88.8"/><path d="M54,87.7L57.3,91L54,94.3L50.7,91Z" stroke-linejoin="round"/><path d="M67,77L67,88"/><rect x="64.20" y="88.20" width="5.6" height="5.6" rx="1.6"/><path d="M73.8,77L73.8,84L78,88.3L78,95"/><rect x="75.20" y="95.20" width="5.6" height="5.6" rx="1.6"/><rect x="5.70" y="25.70" width="5.6" height="5.6" rx="1.6"/><path d="M11.5,28.5L18,28.5L22.8,32.8L29.5,32.8"/><circle cx="18" cy="37.8" r="2.5"/><path d="M20.5,37.8L29.5,37.8"/><rect x="5.70" y="41.20" width="5.6" height="5.6" rx="1.6"/><path d="M11.5,44L18,44L22.8,47L29.5,47"/><path d="M22.5,51.8L29.5,51.8"/><path d="M15,50.2L18.3,53.5L15,56.8L11.7,53.5Z" stroke-linejoin="round"/><path d="M17.5,56L22.8,60L29.5,60"/><rect x="12.70" y="63.70" width="5.6" height="5.6" rx="1.6"/><path d="M18.5,66.5L29.5,66.5"/><rect x="5.70" y="74.70" width="5.6" height="5.6" rx="1.6"/><path d="M11.5,77.5L18,77.5L22.8,73L29.5,73"/><path d="M77.8,32.8L84,32.8L88.5,28.5L95.5,28.5"/><rect x="95.70" y="25.70" width="5.6" height="5.6" rx="1.6"/><path d="M77.8,39.7L88.2,39.7"/><rect x="88.40" y="36.90" width="5.6" height="5.6" rx="1.6"/><path d="M77.8,46L84.5,46L89.2,50.2"/><path d="M91.5,49.2L94.8,52.5L91.5,55.8L88.2,52.5Z" stroke-linejoin="round"/><path d="M77.8,54.3L84.5,54.3"/><path d="M77.8,59L84,59L88.5,62.2L95.5,62.2"/><rect x="95.70" y="59.40" width="5.6" height="5.6" rx="1.6"/><path d="M77.8,68.3L86.3,68.3"/><circle cx="88.8" cy="68.3" r="2.5"/><path d="M77.8,73L84,73L88.5,77.5L95.5,77.5"/><rect x="95.70" y="74.70" width="5.6" height="5.6" rx="1.6"/></g><circle cx="122.2" cy="192.9" r="4.3" fill="#fff"/><g fill="none" stroke="#fff" stroke-width="3.9" stroke-linejoin="round"><path d="M130.75,196.9V179.5H150.3Q153.85,179.5 153.85,183.2V196.9M141.85,179.5V196.9"/><path d="M176.6,179.5H163.3Q159.95,179.5 159.95,182.8V183.4Q159.95,186.6 163.3,186.6H171.3Q174.65,186.6 174.65,189.9V191.8Q174.65,195.1 171.3,195.1H158"/><path d="M195.75,179.5H184.1Q180.75,179.5 180.75,182.8V191.8Q180.75,195.1 184.1,195.1H195.75M195.75,177.6V197.6Q195.75,200.9 192.4,200.9H181"/></g><path d="M22.10,56.8V75.8H26.90C33.30,75.8 35.70,71.2 35.70,66.3C35.70,61.4 33.30,56.8 26.90,56.8ZM50.40,56.8H40.90V75.8H50.60M40.90,65.7H50.00M51.50,68.3H58.80M71.80,56.8H62.30V75.8H72.00M62.30,65.7H71.40M75.80,76.6V56.8L88.70,75.8V56" fill="none" stroke="#fff" stroke-opacity="0.82" stroke-width="1.8" stroke-linejoin="miter" stroke-miterlimit="1.5"/></svg>
<div class="t1">Translator</div></div>
<div class="nm">Translator (DE-EN)</div><div class="md">Mistral-7B-EN-Instruct.g...</div>
<div class="ch">1 chat</div>
<div class="b1"><svg width="23" height="23" viewBox="0 0 24 24"><path d="M4 17v2a2 2 0 0 0 2 2h12a2 2 0 0 0 2 -2v-2M7 9l5 -5l5 5M12 4l0 12"/></svg></div>
<div class="b2"><svg width="22" height="22" viewBox="0 0 24 24"><circle cx="12" cy="5" r="1.5"/><circle cx="12" cy="12" r="1.5"/><circle cx="12" cy="19" r="1.5"/></svg></div>
</div><div class="card" style="left:997.0px;top:816.0px">
<div class="img"><svg width="220" height="220" viewBox="0 0 220 220"><g transform="translate(95,56)" fill="none" stroke="url(#cg)" stroke-width="1.7" stroke-linecap="round" stroke-linejoin="round"><rect x="32.5" y="32.5" width="42" height="41.5" rx="3.8"/><path d="M43.6,63.5V49A6.45,6.45 0 0 1 56.5,49V63.5M43.6,54.6H56.5M63.2,43V63.5"/><rect x="26.20" y="5.20" width="5.6" height="5.6" rx="1.6"/><path d="M29,11L29,18L33.5,22.5L33.5,29"/><rect x="37.20" y="12.20" width="5.6" height="5.6" rx="1.6"/><path d="M40,18L40,29"/><path d="M52.8,11.5L56.099999999999994,14.8L52.8,18.1L49.5,14.8Z" stroke-linejoin="round"/><path d="M50.6,17.3L46.5,22L46.5,29"/><path d="M54.7,21.8L54.7,29"/><rect x="59.70" y="5.20" width="5.6" height="5.6" rx="1.6"/><path d="M62.5,11L62.5,18L59.5,21.5L59.5,29"/><circle cx="68.8" cy="17.8" r="2.5"/><path d="M68.8,20.3L68.8,29"/><rect x="75.20" y="5.20" width="5.6" height="5.6" rx="1.6"/><path d="M78,11L78,18L73.8,22.5L73.8,29"/><path d="M33.3,77L33.3,84L29,88.3L29,95"/><rect x="26.20" y="95.20" width="5.6" height="5.6" rx="1.6"/><path d="M38.2,77L38.2,86"/><circle cx="38.2" cy="88.5" r="2.5"/><path d="M47.7,77L47.7,84L44.5,88L44.5,95"/><rect x="41.70" y="95.20" width="5.6" height="5.6" rx="1.6"/><path d="M52.2,77L52.2,84"/><path d="M60.3,77L60.3,84L56.3,88.8"/><path d="M54,87.7L57.3,91L54,94.3L50.7,91Z" stroke-linejoin="round"/><path d="M67,77L67,88"/><rect x="64.20" y="88.20" width="5.6" height="5.6" rx="1.6"/><path d="M73.8,77L73.8,84L78,88.3L78,95"/><rect x="75.20" y="95.20" width="5.6" height="5.6" rx="1.6"/><rect x="5.70" y="25.70" width="5.6" height="5.6" rx="1.6"/><path d="M11.5,28.5L18,28.5L22.8,32.8L29.5,32.8"/><circle cx="18" cy="37.8" r="2.5"/><path d="M20.5,37.8L29.5,37.8"/><rect x="5.70" y="41.20" width="5.6" height="5.6" rx="1.6"/><path d="M11.5,44L18,44L22.8,47L29.5,47"/><path d="M22.5,51.8L29.5,51.8"/><path d="M15,50.2L18.3,53.5L15,56.8L11.7,53.5Z" stroke-linejoin="round"/><path d="M17.5,56L22.8,60L29.5,60"/><rect x="12.70" y="63.70" width="5.6" height="5.6" rx="1.6"/><path d="M18.5,66.5L29.5,66.5"/><rect x="5.70" y="74.70" width="5.6" height="5.6" rx="1.6"/><path d="M11.5,77.5L18,77.5L22.8,73L29.5,73"/><path d="M77.8,32.8L84,32.8L88.5,28.5L95.5,28.5"/><rect x="95.70" y="25.70" width="5.6" height="5.6" rx="1.6"/><path d="M77.8,39.7L88.2,39.7"/><rect x="88.40" y="36.90" width="5.6" height="5.6" rx="1.6"/><path d="M77.8,46L84.5,46L89.2,50.2"/><path d="M91.5,49.2L94.8,52.5L91.5,55.8L88.2,52.5Z" stroke-linejoin="round"/><path d="M77.8,54.3L84.5,54.3"/><path d="M77.8,59L84,59L88.5,62.2L95.5,62.2"/><rect x="95.70" y="59.40" width="5.6" height="5.6" rx="1.6"/><path d="M77.8,68.3L86.3,68.3"/><circle cx="88.8" cy="68.3" r="2.5"/><path d="M77.8,73L84,73L88.5,77.5L95.5,77.5"/><rect x="95.70" y="74.70" width="5.6" height="5.6" rx="1.6"/></g><circle cx="122.2" cy="192.9" r="4.3" fill="#fff"/><g fill="none" stroke="#fff" stroke-width="3.9" stroke-linejoin="round"><path d="M130.75,196.9V179.5H150.3Q153.85,179.5 153.85,183.2V196.9M141.85,179.5V196.9"/><path d="M176.6,179.5H163.3Q159.95,179.5 159.95,182.8V183.4Q159.95,186.6 163.3,186.6H171.3Q174.65,186.6 174.65,189.9V191.8Q174.65,195.1 171.3,195.1H158"/><path d="M195.75,179.5H184.1Q180.75,179.5 180.75,182.8V191.8Q180.75,195.1 184.1,195.1H195.75M195.75,177.6V197.6Q195.75,200.9 192.4,200.9H181"/></g><path d="M31.60,56.8H22.10V75.8H31.80M22.10,65.7H31.20M35.60,76.6V56.8L48.50,75.8V56" fill="none" stroke="#fff" stroke-opacity="0.82" stroke-width="1.8" stroke-linejoin="miter" stroke-miterlimit="1.5"/></svg>
<div class="t1">Explainer</div></div>
<div class="nm">Explainer (EN)</div><div class="md">Mistral-7B-EN-Instruct.g...</div>
<div class="ch">1 chat</div>
<div class="b1"><svg width="23" height="23" viewBox="0 0 24 24"><path d="M4 17v2a2 2 0 0 0 2 2h12a2 2 0 0 0 2 -2v-2M7 9l5 -5l5 5M12 4l0 12"/></svg></div>
<div class="b2"><svg width="22" height="22" viewBox="0 0 24 24"><circle cx="12" cy="5" r="1.5"/><circle cx="12" cy="12" r="1.5"/><circle cx="12" cy="19" r="1.5"/></svg></div>
</div><div class="card" style="left:1239.0px;top:816.0px">
<div class="img"><svg width="220" height="220" viewBox="0 0 220 220"><g transform="translate(95,56)" fill="none" stroke="url(#cg)" stroke-width="1.7" stroke-linecap="round" stroke-linejoin="round"><rect x="32.5" y="32.5" width="42" height="41.5" rx="3.8"/><path d="M43.6,63.5V49A6.45,6.45 0 0 1 56.5,49V63.5M43.6,54.6H56.5M63.2,43V63.5"/><rect x="26.20" y="5.20" width="5.6" height="5.6" rx="1.6"/><path d="M29,11L29,18L33.5,22.5L33.5,29"/><rect x="37.20" y="12.20" width="5.6" height="5.6" rx="1.6"/><path d="M40,18L40,29"/><path d="M52.8,11.5L56.099999999999994,14.8L52.8,18.1L49.5,14.8Z" stroke-linejoin="round"/><path d="M50.6,17.3L46.5,22L46.5,29"/><path d="M54.7,21.8L54.7,29"/><rect x="59.70" y="5.20" width="5.6" height="5.6" rx="1.6"/><path d="M62.5,11L62.5,18L59.5,21.5L59.5,29"/><circle cx="68.8" cy="17.8" r="2.5"/><path d="M68.8,20.3L68.8,29"/><rect x="75.20" y="5.20" width="5.6" height="5.6" rx="1.6"/><path d="M78,11L78,18L73.8,22.5L73.8,29"/><path d="M33.3,77L33.3,84L29,88.3L29,95"/><rect x="26.20" y="95.20" width="5.6" height="5.6" rx="1.6"/><path d="M38.2,77L38.2,86"/><circle cx="38.2" cy="88.5" r="2.5"/><path d="M47.7,77L47.7,84L44.5,88L44.5,95"/><rect x="41.70" y="95.20" width="5.6" height="5.6" rx="1.6"/><path d="M52.2,77L52.2,84"/><path d="M60.3,77L60.3,84L56.3,88.8"/><path d="M54,87.7L57.3,91L54,94.3L50.7,91Z" stroke-linejoin="round"/><path d="M67,77L67,88"/><rect x="64.20" y="88.20" width="5.6" height="5.6" rx="1.6"/><path d="M73.8,77L73.8,84L78,88.3L78,95"/><rect x="75.20" y="95.20" width="5.6" height="5.6" rx="1.6"/><rect x="5.70" y="25.70" width="5.6" height="5.6" rx="1.6"/><path d="M11.5,28.5L18,28.5L22.8,32.8L29.5,32.8"/><circle cx="18" cy="37.8" r="2.5"/><path d="M20.5,37.8L29.5,37.8"/><rect x="5.70" y="41.20" width="5.6" height="5.6" rx="1.6"/><path d="M11.5,44L18,44L22.8,47L29.5,47"/><path d="M22.5,51.8L29.5,51.8"/><path d="M15,50.2L18.3,53.5L15,56.8L11.7,53.5Z" stroke-linejoin="round"/><path d="M17.5,56L22.8,60L29.5,60"/><rect x="12.70" y="63.70" width="5.6" height="5.6" rx="1.6"/><path d="M18.5,66.5L29.5,66.5"/><rect x="5.70" y="74.70" width="5.6" height="5.6" rx="1.6"/><path d="M11.5,77.5L18,77.5L22.8,73L29.5,73"/><path d="M77.8,32.8L84,32.8L88.5,28.5L95.5,28.5"/><rect x="95.70" y="25.70" width="5.6" height="5.6" rx="1.6"/><path d="M77.8,39.7L88.2,39.7"/><rect x="88.40" y="36.90" width="5.6" height="5.6" rx="1.6"/><path d="M77.8,46L84.5,46L89.2,50.2"/><path d="M91.5,49.2L94.8,52.5L91.5,55.8L88.2,52.5Z" stroke-linejoin="round"/><path d="M77.8,54.3L84.5,54.3"/><path d="M77.8,59L84,59L88.5,62.2L95.5,62.2"/><rect x="95.70" y="59.40" width="5.6" height="5.6" rx="1.6"/><path d="M77.8,68.3L86.3,68.3"/><circle cx="88.8" cy="68.3" r="2.5"/><path d="M77.8,73L84,73L88.5,77.5L95.5,77.5"/><rect x="95.70" y="74.70" width="5.6" height="5.6" rx="1.6"/></g><circle cx="122.2" cy="192.9" r="4.3" fill="#fff"/><g fill="none" stroke="#fff" stroke-width="3.9" stroke-linejoin="round"><path d="M130.75,196.9V179.5H150.3Q153.85,179.5 153.85,183.2V196.9M141.85,179.5V196.9"/><path d="M176.6,179.5H163.3Q159.95,179.5 159.95,182.8V183.4Q159.95,186.6 163.3,186.6H171.3Q174.65,186.6 174.65,189.9V191.8Q174.65,195.1 171.3,195.1H158"/><path d="M195.75,179.5H184.1Q180.75,179.5 180.75,182.8V191.8Q180.75,195.1 184.1,195.1H195.75M195.75,177.6V197.6Q195.75,200.9 192.4,200.9H181"/></g><path d="M31.60,56.8H22.10V75.8H31.80M22.10,65.7H31.20M35.60,76.6V56.8L48.50,75.8V56" fill="none" stroke="#fff" stroke-opacity="0.82" stroke-width="1.8" stroke-linejoin="miter" stroke-miterlimit="1.5"/></svg>
<div class="t1">Brainstormer</div></div>
<div class="nm">Brainstormer (EN)</div><div class="md">Mistral-7B-EN-Instruct.g...</div>
<div class="ch">1 chat</div>
<div class="b1"><svg width="23" height="23" viewBox="0 0 24 24"><path d="M4 17v2a2 2 0 0 0 2 2h12a2 2 0 0 0 2 -2v-2M7 9l5 -5l5 5M12 4l0 12"/></svg></div>
<div class="b2"><svg width="22" height="22" viewBox="0 0 24 24"><circle cx="12" cy="5" r="1.5"/><circle cx="12" cy="12" r="1.5"/><circle cx="12" cy="19" r="1.5"/></svg></div>
</div>
  </div>
  <div style="position:absolute;left:1477px;top:80px;width:8px;height:442px;background:#4a5b66;border-radius:4px"></div>
 </div>
 <div class="status">No model loaded</div>
</div>
</body></html>
